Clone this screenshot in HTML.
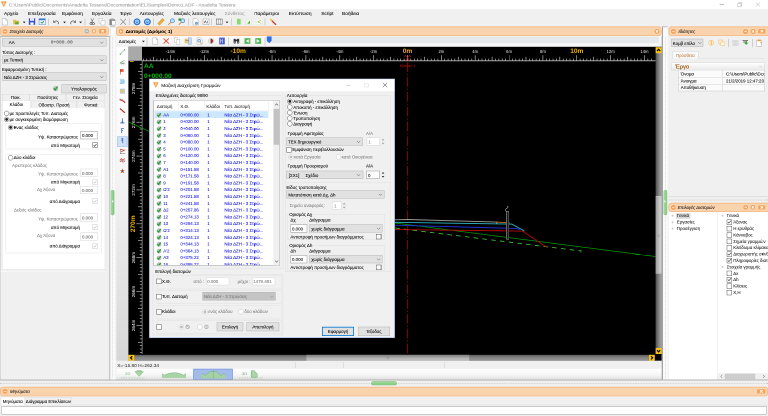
<!DOCTYPE html>
<html lang="el"><head><meta charset="utf-8"><title>Anadelta Tessera</title>
<style>
html,body{margin:0;padding:0;background:#f0f0f0;overflow:hidden;}
body{width:768px;height:416px;position:relative;}
#r{position:absolute;left:0;top:0;width:1920px;height:1040px;transform:scale(.8);transform-origin:0 0;
 font-family:"Liberation Sans",sans-serif;font-size:11px;color:#000;background:#f0f0f0;overflow:hidden;}
#r div,#r svg{position:absolute;box-sizing:border-box;}
#r svg{overflow:visible;}
.t{white-space:nowrap;line-height:20px;height:20px;-webkit-text-stroke:.15px;}
#o{position:absolute;left:0;top:0;width:1536px;height:832px;transform:scale(.5);transform-origin:0 0;will-change:transform;overflow:hidden;}
.m{font-size:12px;}
.g{color:#838383;}
.b{font-weight:bold;}
.i{font-style:italic;}
.mono{font-family:"Liberation Mono",monospace;}
.hdr{background:#f9d3ae;border:2px solid #f6ba82;border-radius:7px;}
.combo{background:#e1e1e1;border:1px solid #adadad;}
.inp{background:#fff;border:1px solid #7a7a7a;}
.inpd{background:#fff;border:1px solid #ccc;}
.btn{background:#e1e1e1;border:1px solid #adadad;text-align:center;}
.cb{background:#fff;border:1px solid #333;}
.cbd{background:#fff;border:1px solid #bcbcbc;}
.rd{background:#fff;border:1px solid #333;border-radius:50%;}
.rdd{background:#fff;border:1px solid #bcbcbc;border-radius:50%;}
.gb{border:1px solid #dcdcdc;}
.blue{color:#1414e6;}

</style></head>
<body>
<div id="o"><div id="r">
<div style="left:0px;top:0px;width:1920px;height:23px;background:#fff;"></div>
<svg style="left:1px;top:2px;" width="17" height="17" viewBox="0 0 17 17"><path d="M2.500 1.500h12q1.500 0 .8 1.500l-5.800 11.500q-1 1.500-2 0l-5.800-11.500q-.7-1.500.8-1.500z" fill="#f6a352"/><path d="M6 5h5l-2.500 4.500z" fill="#fbd3a8"/><rect x="7.900" y="4.500" width="1.300" height="4" fill="#fff"/><rect x="7.900" y="9.500" width="1.300" height="1.300" fill="#fff"/></svg>
<div class="t m" style="left:22px;top:1.5px;color:#9b9b9b;">C:\Users\Public\Documents\Anadelta Tessera\Documentation\EL\Samples\Demo1.ADF - Anadelta Tessera</div>
<svg style="left:1799px;top:11px;" width="11" height="1.4" viewBox="0 0 11 1.4"><rect width="11" height="1.400" fill="#8c8c8c"/></svg>
<svg style="left:1844px;top:6px;" width="11" height="11" viewBox="0 0 11 11"><path d="M2.500 2.500v-2h8v8h-2" fill="none" stroke="#a0a0a0"/><rect x=".5" y="2.500" width="8" height="8" fill="#fff" stroke="#a0a0a0"/></svg>
<svg style="left:1890px;top:6px;" width="10" height="10" viewBox="0 0 10 10"><path d="M0 0l10 10M10 0l-10 10" stroke="#a0a0a0" stroke-width="1.1"/></svg>
<div style="left:0px;top:23px;width:1920px;height:20px;background:#f0f0f0;"></div>
<div class="t m" style="left:10px;top:22.5px;">Αρχείο</div>
<div class="t m" style="left:70px;top:22.5px;">Επεξεργασία</div>
<div class="t m" style="left:155px;top:22.5px;">Εμφάνιση</div>
<div class="t m" style="left:230px;top:22.5px;">Εργαλεία</div>
<div class="t m" style="left:300px;top:22.5px;">Έργο</div>
<div class="t m" style="left:349px;top:22.5px;">Λειτουργίες</div>
<div class="t m" style="left:435px;top:22.5px;">Μαζικές λειτουργίες</div>
<div class="t m" style="left:562px;top:22.5px;color:#9a9a9a;">Σύνθετος</div>
<div class="t m" style="left:635px;top:22.5px;">Παράμετροι</div>
<div class="t m" style="left:722px;top:22.5px;">Εκτύπωση</div>
<div class="t m" style="left:803px;top:22.5px;">Script</div>
<div class="t m" style="left:855px;top:22.5px;">Βοήθεια</div>
<div style="left:0px;top:43px;width:1920px;height:23px;background:#f0f0f0;"></div>
<svg style="left:5px;top:46px;" width="14" height="17" viewBox="0 0 14 17"><path d="M.5 .5h9l4 4v12h-13z" fill="#fff" stroke="#9a9a9a"/><path d="M9.5 .5v4h4" fill="#ddd" stroke="#9a9a9a"/></svg>
<svg style="left:33px;top:48px;" width="15" height="13" viewBox="0 0 15 13"><path d="M0 1.500h6l2 2h7v9.500h-15z" fill="#dcc04a"/><path d="M5 6.500h8v6.500h-8z" fill="#5fae3c"/></svg>
<svg style="left:57px;top:54px;" width="7" height="4" viewBox="0 0 7 4"><path d="M0 0h7l-3.5 4z" fill="#222"/></svg>
<svg style="left:72px;top:46px;" width="16" height="16" viewBox="0 0 16 16"><path d="M0 0h16v16h-16z" fill="#3a50c8"/><rect x="3" y="0" width="10" height="6" fill="#e8ecff"/><rect x="4" y="10" width="8" height="6" fill="#fff"/></svg>
<svg style="left:97px;top:46px;" width="17" height="16" viewBox="0 0 17 16"><rect x=".5" y=".5" width="16" height="15" fill="#eaf2ff" stroke="#3a78d0"/><rect x=".5" y=".5" width="16" height="4" fill="#3a78d0"/><path d="M5 9l3 3l5-5" stroke="#2a9a3a" stroke-width="2" fill="none"/></svg>
<div style="left:120px;top:46px;width:1px;height:17px;background:#a0a0a0;"></div>
<svg style="left:133px;top:48px;" width="15" height="13" viewBox="0 0 15 13"><g ><path d="M1 3v5h5" fill="none" stroke="#555" stroke-width="1.6"/><path d="M1.5 8c2-4 7-5 10-2s2 6 0 6" fill="none" stroke="#555" stroke-width="1.8"/></g></svg>
<svg style="left:158px;top:54px;" width="7" height="4" viewBox="0 0 7 4"><path d="M0 0h7l-3.5 4z" fill="#222"/></svg>
<svg style="left:175px;top:48px;" width="15" height="13" viewBox="0 0 15 13"><g transform="translate(15 0) scale(-1 1)"><path d="M1 3v5h5" fill="none" stroke="#555" stroke-width="1.6"/><path d="M1.5 8c2-4 7-5 10-2s2 6 0 6" fill="none" stroke="#555" stroke-width="1.8"/></g></svg>
<svg style="left:198px;top:54px;" width="7" height="4" viewBox="0 0 7 4"><path d="M0 0h7l-3.5 4z" fill="#222"/></svg>
<div style="left:212px;top:46px;width:1px;height:17px;background:#a0a0a0;"></div>
<svg style="left:224px;top:46px;" width="13" height="17" viewBox="0 0 13 17"><path d="M3 0l5 10M10 0l-5 10" stroke="#666" stroke-width="1.4"/><circle cx="3.5" cy="13" r="2.6" fill="none" stroke="#444" stroke-width="1.4"/><circle cx="9.5" cy="13" r="2.6" fill="none" stroke="#444" stroke-width="1.4"/></svg>
<svg style="left:247px;top:46px;" width="16" height="17" viewBox="0 0 16 17"><rect x=".5" y=".5" width="9" height="11" fill="#fff" stroke="#aaa"/><rect x="5.5" y="4.5" width="10" height="12" fill="#fff" stroke="#aaa"/></svg>
<svg style="left:274px;top:46px;" width="16" height="17" viewBox="0 0 16 17"><rect x=".5" y="2.5" width="12" height="14" fill="#888" stroke="#666"/><rect x="5.5" y="5.5" width="10" height="11" fill="#fff" stroke="#999"/><rect x="3" y="0" width="7" height="4" fill="#aaa"/></svg>
<svg style="left:301px;top:47px;" width="14" height="15" viewBox="0 0 14 15"><path d="M0 0l14 15M14 0l-14 15" stroke="#7a7a7a" stroke-width="1.600"/></svg>
<div style="left:323px;top:46px;width:1px;height:17px;background:#a0a0a0;"></div>
<svg style="left:334px;top:46px;" width="17" height="17" viewBox="0 0 17 17"><circle cx="8.5" cy="8.5" r="8" fill="#2f7fd6" stroke="#1b5db0"/><circle cx="8.5" cy="8.5" r="4.2" fill="none" stroke="#d8ecff" stroke-width="1.6"/><rect x="6" y="7.7" width="5" height="1.6" fill="#d8ecff"/></svg>
<svg style="left:360px;top:46px;" width="17" height="17" viewBox="0 0 17 17"><circle cx="8.5" cy="8.5" r="8" fill="#2f7fd6" stroke="#1b5db0"/><circle cx="8.5" cy="8.5" r="4.2" fill="none" stroke="#d8ecff" stroke-width="1.6"/><rect x="6" y="7.7" width="5" height="1.6" fill="#d8ecff"/></svg>
<div style="left:384px;top:46px;width:1px;height:17px;background:#a0a0a0;"></div>
<svg style="left:394px;top:46px;" width="17" height="17" viewBox="0 0 17 17"><path d="M0 13l12-13l5 4l-12 13z" fill="#e8b23a" stroke="#c08a1c"/></svg>
<svg style="left:420px;top:46px;" width="17" height="17" viewBox="0 0 17 17"><circle cx="11" cy="6" r="5" fill="#bfe0ff" stroke="#3a7ad0" stroke-width="1.5"/><path d="M7 10l-6 6" stroke="#d9952a" stroke-width="2.6"/></svg>
<svg style="left:446px;top:46px;" width="17" height="17" viewBox="0 0 17 17"><circle cx="11" cy="6" r="5" fill="#bfe0ff" stroke="#3a7ad0" stroke-width="1.5"/><path d="M7 10l-6 6" stroke="#d9952a" stroke-width="2.6"/><rect x="0" y="0" width="7" height="6" fill="#3a9a3a"/></svg>
<div style="left:471px;top:46px;width:1px;height:17px;background:#a0a0a0;"></div>
<svg style="left:482px;top:46px;" width="14" height="17" viewBox="0 0 14 17"><path d="M.5 .5h9l4 4v12h-13z" fill="#fff" stroke="#9a9a9a"/><circle cx="9" cy="12" r="3" fill="#7ab0ea" stroke="#3a6ab0"/></svg>
<svg style="left:507px;top:47px;" width="16" height="15" viewBox="0 0 16 15"><rect x=".5" y=".5" width="15" height="14" fill="#fff" stroke="#8a8a8a"/><path d="M3 11l3-6l3 6m2 0v-6" stroke="#333" stroke-width="1.3" fill="none"/></svg>
<div style="left:529px;top:46px;width:1px;height:17px;background:#a0a0a0;"></div>
<svg style="left:540px;top:47px;" width="16" height="14" viewBox="0 0 16 14"><rect x=".6" y=".6" width="14.800" height="12.800" fill="#fff" stroke="#444" stroke-width="1.2"/><path d="M5.500 0v14M10.500 0v14" stroke="#444" stroke-width="1"/></svg>
<svg style="left:564px;top:54px;" width="7" height="4" viewBox="0 0 7 4"><path d="M0 0h7l-3.5 4z" fill="#222"/></svg>
<div style="left:578px;top:46px;width:1px;height:17px;background:#a0a0a0;"></div>
<svg style="left:590px;top:46px;" width="14" height="16" viewBox="0 0 14 16"><rect x="0" y="0" width="14" height="16" fill="#dff2d4"/><rect x="2.500" y="1" width="9" height="14" fill="#90d47c"/></svg>
<svg style="left:614px;top:47px;" width="16" height="15" viewBox="0 0 16 15"><rect x=".5" y=".5" width="15" height="14" fill="#f2f9ea" stroke="#cfe6c4"/><path d="M4 12l7-7v7z" fill="#4aa83c"/></svg>
<svg style="left:640px;top:47px;" width="16" height="15" viewBox="0 0 16 15"><rect x=".5" y=".5" width="15" height="14" fill="#fcfcee" stroke="#e4e4d8"/><path d="M12 3.500l-7 4l7 4" fill="none" stroke="#6ab84c" stroke-width="1.4"/></svg>
<div style="left:662px;top:46px;width:1px;height:17px;background:#a0a0a0;"></div>
<svg style="left:674px;top:46px;" width="19" height="18" viewBox="0 0 19 18"><path d="M3 3l13 13" stroke="#d23a2a" stroke-width="3.4"/><path d="M1 1l5 5" stroke="#f2c84a" stroke-width="3.4"/><path d="M10 2l1 2M14 5l2-1" stroke="#f0c040" stroke-width="1.2"/></svg>
<div class="hdr" style="left:0px;top:66px;width:272px;height:24px;"></div>
<svg style="left:4.5px;top:70.5px;" width="15" height="15" viewBox="0 0 15 15"><circle cx="7.5" cy="7.5" r="6.9" fill="#f4a55c" stroke="#fbe3c8" stroke-width="1.2"/><rect x="4.5" y="6.7" width="6" height="1.6" fill="#fff"/></svg>
<div class="t i" style="left:24px;top:68px;color:#1a1a1a;">Στοιχεία Διατομής</div>
<svg style="left:210px;top:71px;" width="14" height="14" viewBox="0 0 14 14"><circle cx="7.0" cy="7.0" r="6.4" fill="#b4b4b4" stroke="#fbe3c8" stroke-width="1.2"/><path d="M4.0 8.5l3-3l3 3" stroke="#fff" stroke-width="1.5" fill="none"/></svg>
<svg style="left:228px;top:71px;" width="14" height="14" viewBox="0 0 14 14"><circle cx="7.0" cy="7.0" r="6.4" fill="#f4a55c" stroke="#fbe3c8" stroke-width="1.2"/><rect x="5.0" y="4.0" width="4" height="6" rx="1" fill="#fff"/></svg>
<svg style="left:246px;top:71px;" width="21" height="14" viewBox="0 0 21 14"><rect x=".5" y=".5" width="20" height="13" rx="4" fill="#f4a55c" stroke="#fbe3c8" stroke-width="1.2"/><path d="M7.5 4.0l6 6m0-6l-6 6" stroke="#fff" stroke-width="2"/></svg>
<div class="hdr" style="left:290px;top:66px;width:1364px;height:24px;"></div>
<svg style="left:294.5px;top:70.5px;" width="15" height="15" viewBox="0 0 15 15"><circle cx="7.5" cy="7.5" r="6.9" fill="#f4a55c" stroke="#fbe3c8" stroke-width="1.2"/><path d="M5.5 4.5l5 3l-5 3z" fill="#fff"/></svg>
<div class="t b" style="left:314px;top:68px;font-size:12px;">Διατομές (Δρόμος 1)</div>
<svg style="left:1634.5px;top:70.5px;" width="15" height="15" viewBox="0 0 15 15"><circle cx="7.5" cy="7.5" r="6.9" fill="#f4a55c" stroke="#fbe3c8" stroke-width="1.2"/><rect x="5.5" y="4.5" width="4" height="6" rx="1" fill="#fff"/></svg>
<div class="hdr" style="left:1671px;top:66px;width:260px;height:24px;"></div>
<svg style="left:1675.5px;top:70.5px;" width="15" height="15" viewBox="0 0 15 15"><circle cx="7.5" cy="7.5" r="6.9" fill="#f4a55c" stroke="#fbe3c8" stroke-width="1.2"/><rect x="4.5" y="6.7" width="6" height="1.6" fill="#fff"/></svg>
<div class="t i" style="left:1696px;top:68px;color:#1a1a1a;">Ιδιότητες</div>
<svg style="left:1855.5px;top:70.5px;" width="15.5" height="15.5" viewBox="0 0 15.5 15.5"><circle cx="7.75" cy="7.75" r="7.15" fill="#f4a55c" stroke="#fbe3c8" stroke-width="1.2"/><path d="M4.75 9.25l3-3l3 3" stroke="#fff" stroke-width="1.5" fill="none"/></svg>
<svg style="left:1874.5px;top:70.5px;" width="15.5" height="15.5" viewBox="0 0 15.5 15.5"><circle cx="7.75" cy="7.75" r="7.15" fill="#f4a55c" stroke="#fbe3c8" stroke-width="1.2"/><rect x="5.75" y="4.75" width="4" height="6" rx="1" fill="#fff"/></svg>
<svg style="left:1894px;top:71px;" width="21" height="14" viewBox="0 0 21 14"><rect x=".5" y=".5" width="20" height="13" rx="4" fill="#f4a55c" stroke="#fbe3c8" stroke-width="1.2"/><path d="M7.5 4.0l6 6m0-6l-6 6" stroke="#fff" stroke-width="2"/></svg>
<div style="left:0px;top:90px;width:274.5px;height:861px;background:#f0f0f0;border-left:1px solid #b4b4b4;border-right:1.5px solid #8c8c8c;border-bottom:1px solid #b0b0b0;"></div>
<div style="left:1px;top:90px;width:272px;height:2px;background:#b0b0b0;"></div>
<div class="combo" style="left:6px;top:95px;width:260px;height:21px;"></div>
<div class="t" style="left:22px;top:96px;">ΑΑ</div>
<div class="t mono" style="left:127px;top:96px;font-size:11.4px;color:#555;">0+000.00</div>
<svg style="left:250px;top:103.5px;" width="9" height="5" viewBox="0 0 9 5"><path d="M.5 .5l4 4l4-4" fill="none" stroke="#444" stroke-width="1.1"/></svg>
<div class="t" style="left:5px;top:120.5px;">Τύπος Διατομής  :</div>
<div class="combo" style="left:6px;top:139px;width:260px;height:21px;"></div>
<div class="t" style="left:10px;top:140px;">με Τυπική</div>
<svg style="left:250px;top:147.5px;" width="9" height="5" viewBox="0 0 9 5"><path d="M.5 .5l4 4l4-4" fill="none" stroke="#444" stroke-width="1.1"/></svg>
<div class="t" style="left:5px;top:163.5px;">Εφαρμοσμένη Τυπική :</div>
<div class="combo" style="left:6px;top:180.5px;width:260px;height:21.5px;"></div>
<div class="t" style="left:10px;top:182.5px;">Νέα ΔΖΗ - 3 Στρώσεις</div>
<svg style="left:250px;top:189.5px;" width="9" height="5" viewBox="0 0 9 5"><path d="M.5 .5l4 4l4-4" fill="none" stroke="#444" stroke-width="1.1"/></svg>
<svg style="left:132px;top:214px;" width="14" height="14" viewBox="0 0 14 14"><circle cx="7" cy="7.500" r="6.500" fill="#bdbdbd"/><path d="M2.500 7l3.300 3.800l6-8.800" stroke="#16a02c" stroke-width="2.900" fill="none"/></svg>
<div class="btn" style="left:154px;top:210.5px;width:112px;height:22px;"></div>
<div class="t" style="left:154px;top:212px;width:112px;text-align:center;">Υπολογισμός</div>
<div style="left:5px;top:235px;width:69px;height:17px;background:#f0f0f0;border:1px solid #d9d9d9;border-bottom:none;"></div>
<div class="t" style="left:5px;top:234px;width:69px;text-align:center;">Ποικ.</div>
<div style="left:74px;top:235px;width:91px;height:17px;background:#f0f0f0;border:1px solid #d9d9d9;border-bottom:none;"></div>
<div class="t" style="left:74px;top:234px;width:91px;text-align:center;">Ποσότητες</div>
<div style="left:165px;top:235px;width:97px;height:17px;background:#f0f0f0;border:1px solid #d9d9d9;border-bottom:none;"></div>
<div class="t" style="left:165px;top:234px;width:97px;text-align:center;">Γεν. Στοιχεία</div>
<div style="left:5px;top:251px;width:72px;height:19px;background:#fff;border:1px solid #d9d9d9;border-bottom:none;"></div>
<div class="t" style="left:5px;top:251px;width:72px;text-align:center;">Κλάδοι</div>
<div style="left:79px;top:252px;width:112px;height:18px;background:#f0f0f0;border:1px solid #d9d9d9;border-bottom:none;"></div>
<div class="t" style="left:79px;top:251.5px;width:112px;text-align:center;">Οδοστρ. Προσή</div>
<div style="left:192px;top:252px;width:70px;height:18px;background:#f0f0f0;border:1px solid #d9d9d9;border-bottom:none;"></div>
<div class="t" style="left:192px;top:251.5px;width:70px;text-align:center;">Φυτικά</div>
<div style="left:5px;top:270px;width:258px;height:404px;background:#fff;border:1px solid #d9d9d9;border-top:none;"></div>
<div class="rd" style="left:10px;top:276.5px;width:13px;height:13px;"></div>
<div class="t" style="left:24px;top:273px;">με προεπιλεγές Τυπ. Διατομές</div>
<div class="rd" style="left:10px;top:291.5px;width:13px;height:13px;"></div>
<div style="left:13px;top:294.5px;width:7px;height:7px;background:#222;border-radius:50%;"></div>
<div class="t" style="left:24px;top:288px;">με συγκεκριμένη διαμόρφωση</div>
<div class="gb" style="left:14px;top:309px;width:240px;height:64px;"></div>
<div class="rd" style="left:20px;top:311.5px;width:13px;height:13px;"></div>
<div style="left:23px;top:314.5px;width:7px;height:7px;background:#222;border-radius:50%;"></div>
<div class="t" style="left:34px;top:308px;">Ενας κλάδος</div>
<div class="t" style="right:1725px;top:332px;">Υψ. Καταστρώματος</div>
<div class="inp" style="left:201px;top:328px;width:43px;height:20px;"></div>
<div class="t" style="left:205px;top:328.5px;">0.000</div>
<div class="t" style="right:1720px;top:352.5px;">από Μηκοτομή</div>
<div class="cb" style="left:231px;top:356px;width:13px;height:13px;"></div>
<svg style="left:233px;top:358.5px;" width="9" height="8" viewBox="0 0 9 8"><path d="M.8 4l2.6 2.8l5-6" fill="none" stroke="#222" stroke-width="1.4"/></svg>
<div class="gb" style="left:14px;top:385px;width:240px;height:248px;"></div>
<div class="rd" style="left:20px;top:387.5px;width:13px;height:13px;"></div>
<div class="t" style="left:34px;top:384px;">Δύο κλάδοι</div>
<div class="t g" style="left:30px;top:402.5px;">Αριστερός κλάδος</div>
<div class="t g" style="right:1725px;top:425px;">Υψ. Καταστρώματος</div>
<div class="inpd" style="left:201px;top:422px;width:43px;height:20px;"></div>
<div class="t" style="left:205px;top:422.5px;color:#666;">0.000</div>
<div class="t" style="right:1720px;top:445px;">από Μηκοτομή</div>
<div class="cbd" style="left:231px;top:448.5px;width:13px;height:13px;"></div>
<svg style="left:233px;top:451px;" width="9" height="8" viewBox="0 0 9 8"><path d="M.8 4l2.6 2.8l5-6" fill="none" stroke="#bdbdbd" stroke-width="1.4"/></svg>
<div class="t g" style="right:1782px;top:464px;">Δχ Άξονα</div>
<div class="inpd" style="left:201px;top:465px;width:43px;height:20px;"></div>
<div class="t" style="left:205px;top:465.5px;color:#666;">0.000</div>
<div class="t" style="right:1720px;top:492.5px;">από Διάγραμμα</div>
<div class="cbd" style="left:231px;top:496px;width:13px;height:13px;"></div>
<svg style="left:233px;top:498.5px;" width="9" height="8" viewBox="0 0 9 8"><path d="M.8 4l2.6 2.8l5-6" fill="none" stroke="#bdbdbd" stroke-width="1.4"/></svg>
<div class="t g" style="left:35px;top:515px;">Δεξιός κλάδος</div>
<div class="t g" style="right:1725px;top:537px;">Υψ. Καταστρώματος</div>
<div class="inpd" style="left:201px;top:534px;width:43px;height:20px;"></div>
<div class="t" style="left:205px;top:534.5px;color:#666;">0.000</div>
<div class="t" style="right:1720px;top:557.5px;">από Μηκοτομή</div>
<div class="cbd" style="left:231px;top:561px;width:13px;height:13px;"></div>
<svg style="left:233px;top:563.5px;" width="9" height="8" viewBox="0 0 9 8"><path d="M.8 4l2.6 2.8l5-6" fill="none" stroke="#bdbdbd" stroke-width="1.4"/></svg>
<div class="t g" style="right:1782px;top:579px;">Δχ Άξονα</div>
<div class="inpd" style="left:201px;top:581px;width:43px;height:20px;"></div>
<div class="t" style="left:205px;top:581.5px;color:#666;">0.000</div>
<div class="t" style="right:1720px;top:605px;">από Διάγραμμα</div>
<div class="cbd" style="left:231px;top:608.5px;width:13px;height:13px;"></div>
<svg style="left:233px;top:611px;" width="9" height="8" viewBox="0 0 9 8"><path d="M.8 4l2.6 2.8l5-6" fill="none" stroke="#bdbdbd" stroke-width="1.4"/></svg>
<div style="left:1px;top:677px;width:262px;height:2px;background:#fcfcfc;"></div>
<div style="left:275px;top:66px;width:15px;height:885px;background:#f0f0f0;"></div>
<div style="left:276px;top:66px;width:12px;height:883px;background:#fafafa;border-top:2px solid #b4b4b4;border-left:1px solid #d8d8d8;"></div>
<div style="left:281px;top:92px;width:1px;height:852px;border-left:1px dotted #b0b0b0;"></div>
<div style="left:277px;top:475px;width:9px;height:63px;background:linear-gradient(90deg,#a8dca0,#7cc878);border:1px solid #6ab868;border-radius:4px;"></div>
<svg style="left:278px;top:500px;" width="5" height="7" viewBox="0 0 5 7"><path d="M5 0v7l-4-3.5z" fill="#fff"/></svg>
<div style="left:290px;top:90px;width:1365px;height:861px;background:#f0f0f0;border-right:1px solid #a8a8a8;border-bottom:1px solid #b0b0b0;"></div>
<div style="left:291px;top:90px;width:1363px;height:27px;background:linear-gradient(#fbfbfb,#f1f1f1);"></div>
<div class="t" style="left:297px;top:93px;">Διατομές</div>
<svg style="left:355px;top:102px;" width="7" height="4" viewBox="0 0 7 4"><path d="M0 0h7l-3.5 4z" fill="#222"/></svg>
<div style="left:367px;top:93px;width:1px;height:21px;background:#9a9a9a;"></div>
<svg style="left:381px;top:94px;" width="14" height="17" viewBox="0 0 14 17"><path d="M.5 .5h9l4 4v12h-13z" fill="#fff" stroke="#9a9a9a"/><path d="M9.5 .5v4h4" fill="#ddd" stroke="#9a9a9a"/></svg>
<svg style="left:408px;top:95px;" width="15" height="15" viewBox="0 0 15 15"><path d="M1 1l13 13M14 1l-13 13" stroke="#e8402a" stroke-width="2.2"/></svg>
<svg style="left:435px;top:94px;" width="15" height="17" viewBox="0 0 15 17"><rect x=".5" y=".5" width="9" height="11" fill="#fff" stroke="#aaa"/><rect x="5.5" y="4.5" width="9" height="12" fill="#fff" stroke="#aaa"/></svg>
<svg style="left:462px;top:94px;" width="17" height="17" viewBox="0 0 17 17"><rect x=".5" y="3.5" width="11" height="10" fill="#f5d77a" stroke="#c9a53a"/><rect x="8.5" y=".5" width="8" height="16" fill="#c8d8f0" stroke="#7a9ad0"/><path d="M2 8h8" stroke="#555" stroke-width="1.4"/></svg>
<svg style="left:492px;top:94px;" width="15" height="17" viewBox="0 0 15 17"><path d="M.5 .5h9l4 4v12h-13z" fill="#fff" stroke="#9a9a9a"/><circle cx="6" cy="8" r="3.4" fill="#cfe6ff" stroke="#3a7ad0" stroke-width="1.3"/><path d="M8 11l4 4" stroke="#d9952a" stroke-width="2"/></svg>
<svg style="left:520px;top:95px;" width="15" height="15" viewBox="0 0 15 15"><circle cx="7.5" cy="7.5" r="7" fill="#e9e9e9" stroke="#bdbdbd"/><path d="M7.5 2a5.5 5.5 0 0 1 0 11z" fill="#d8281e"/><rect x="6.6" y="2" width="1.8" height="11" fill="#333"/></svg>
<svg style="left:548px;top:94px;" width="14" height="17" viewBox="0 0 14 17"><rect x="0" y="0" width="14" height="17" fill="#4a5ad2"/><path d="M3 3v11M3 8h5M8 3v11" stroke="#cfd6ff" stroke-width="1.6" fill="none"/></svg>
<div style="left:571px;top:93px;width:1px;height:21px;background:#9a9a9a;"></div>
<svg style="left:583px;top:95px;" width="16" height="15" viewBox="0 0 16 15"><rect x="1" y="2" width="5.5" height="12" rx="2" fill="#333"/><rect x="9.5" y="2" width="5.5" height="12" rx="2" fill="#333"/><rect x="5" y="4" width="6" height="4" fill="#333"/><rect x="2.2" y="9" width="3" height="4" fill="#999"/><rect x="10.8" y="9" width="3" height="4" fill="#999"/></svg>
<svg style="left:611px;top:95px;" width="15" height="15" viewBox="0 0 15 15"><rect x=".5" y=".5" width="14" height="14" fill="#56b456" stroke="#7cc87c"/><path d="M10 3.500v8l-6-4z" fill="#fff"/><rect x="10" y="3.500" width="2" height="8" fill="#c8e8c8"/></svg>
<svg style="left:638px;top:95px;" width="15" height="15" viewBox="0 0 15 15"><rect x=".5" y=".5" width="14" height="14" fill="#56b456" stroke="#7cc87c"/><path d="M5 3.500v8l6-4z" fill="#fff"/><rect x="3" y="3.500" width="2" height="8" fill="#c8e8c8"/></svg>
<div style="left:662px;top:93px;width:1px;height:21px;background:#9a9a9a;"></div>
<div style="left:666px;top:91px;width:981px;height:17px;background:#e6e9ec;"></div>
<div style="left:666px;top:108px;width:981px;height:8px;background:#f7f7f7;"></div>
<svg style="left:667px;top:91px;" width="12" height="17" viewBox="0 0 12 17"><path d="M0 0h12v11l-6 6l-6-6z" fill="#2f6fe0"/></svg>
<div style="left:291px;top:117px;width:30px;height:785px;background:linear-gradient(#ffffff 0%,#fafafa 30%,#d6d6d6 100%);"></div>
<svg style="left:298px;top:122px;" width="16" height="16" viewBox="0 0 18 18"><path d="M3 15l12-12" stroke="#2a8a2a" stroke-width="1.400"/><circle cx="3" cy="15" r="1.600" fill="#2a7a2a"/><circle cx="15" cy="3" r="1.600" fill="#2a7a2a"/></svg>
<svg style="left:298px;top:147px;" width="16" height="16" viewBox="0 0 18 18"><path d="M2 12l13-8M2 12h14" stroke="#3a7a3a" stroke-width="1.4" fill="none"/><path d="M6 16l4-4l4 4" stroke="#333" stroke-width="1.2" fill="none"/></svg>
<svg style="left:298px;top:171px;" width="16" height="16" viewBox="0 0 18 18"><path d="M3 2v15" stroke="#a03020" stroke-width="1.500"/><path d="M3.500 2.500h10l-2 3.500l2 3.500h-10z" fill="#e8481e"/></svg>
<svg style="left:298px;top:196px;" width="16" height="16" viewBox="0 0 18 18"><path d="M2 3h11l3 6l-3 6h-11l2.500-6z" fill="#a4d4f0" stroke="#86bce0"/></svg>
<svg style="left:298px;top:220px;" width="16" height="16" viewBox="0 0 18 18"><rect x="2" y="2" width="14" height="14" fill="#b4c8ec"/><rect x="5" y="5" width="8" height="8" fill="#f0c850"/></svg>
<svg style="left:298px;top:245px;" width="16" height="16" viewBox="0 0 18 18"><path d="M1 5c6 0 10 3 16 9" stroke="#c8281e" stroke-width="2.6" fill="none"/><path d="M1 3c6 0 11 3 16 8" stroke="#333" stroke-width="1" fill="none"/></svg>
<svg style="left:298px;top:269px;" width="16" height="16" viewBox="0 0 18 18"><path d="M2 3l14 12" stroke="#d0281e" stroke-width="2.8"/><path d="M3 2l14 12" stroke="#333" stroke-width="1"/></svg>
<svg style="left:298px;top:294px;" width="16" height="16" viewBox="0 0 18 18"><path d="M9 2v12M3 15h12" stroke="#3a6ab8" stroke-width="2.2"/><path d="M6 15l3-7l3 7z" fill="#3a6ab8"/></svg>
<svg style="left:298px;top:318px;" width="16" height="16" viewBox="0 0 18 18"><path d="M7 2v15M7 4h6M7 9h4" stroke="#3a6ab8" stroke-width="2.2" fill="none"/></svg>
<div style="left:293px;top:341px;width:25px;height:26px;background:#cfe0f7;border:1px solid #8ab0e8;"></div>
<svg style="left:298px;top:343px;" width="16" height="16" viewBox="0 0 18 18"><path d="M10 2v15M5 5h5M6 10h4" stroke="#3a6ab8" stroke-width="2.2" fill="none"/></svg>
<svg style="left:298px;top:370px;" width="16" height="16" viewBox="0 0 18 18"><path d="M3 2v15M3 16h14" stroke="#555" stroke-width="1.2"/><path d="M3 4l12 2l-10 5" stroke="#d0281e" stroke-width="1.8" fill="none"/></svg>
<svg style="left:298px;top:394px;" width="16" height="16" viewBox="0 0 18 18"><path d="M2 6l4-3l4 4l6-4M2 12l5-3l3 4l6-2" stroke="#d0281e" stroke-width="1.6" fill="none"/><path d="M1 9h16" stroke="#555" stroke-width="1"/></svg>
<svg style="left:298px;top:420px;" width="16" height="16" viewBox="0 0 18 18"><path d="M9 1l2 5h5l-4 3l2 6l-5-3l-5 3l2-6l-4-3h5z" fill="#d86a1e"/><circle cx="9" cy="9" r="2.2" fill="#3a4ac8"/></svg>
<div style="left:321px;top:117px;width:1333px;height:785px;background:#000;"></div>
<div style="left:321px;top:117px;width:34px;height:35px;background:#a9a9a9;"></div>
<svg style="left:0;top:0" width="1920" height="1040" viewBox="0 0 1920 1040" font-family="Liberation Sans, sans-serif"><rect x="355" y="151" width="1284" height="2" fill="#cccccc"/><rect x="357.7" y="146.5" width="1.600" height="5.5" fill="#c4c4c4"/><rect x="366.1" y="146.5" width="1.600" height="5.5" fill="#c4c4c4"/><rect x="374.6" y="146.5" width="1.600" height="5.5" fill="#c4c4c4"/><rect x="383.1" y="142" width="1.600" height="10" fill="#c4c4c4"/><rect x="391.5" y="146.5" width="1.600" height="5.5" fill="#c4c4c4"/><rect x="400.0" y="146.5" width="1.600" height="5.5" fill="#c4c4c4"/><rect x="408.4" y="146.5" width="1.600" height="5.5" fill="#c4c4c4"/><rect x="416.9" y="146.5" width="1.600" height="5.5" fill="#c4c4c4"/><rect x="425.4" y="138" width="1.600" height="14" fill="#c4c4c4"/><rect x="433.8" y="146.5" width="1.600" height="5.5" fill="#c4c4c4"/><rect x="442.3" y="146.5" width="1.600" height="5.5" fill="#c4c4c4"/><rect x="450.8" y="146.5" width="1.600" height="5.5" fill="#c4c4c4"/><rect x="459.2" y="146.5" width="1.600" height="5.5" fill="#c4c4c4"/><rect x="467.7" y="142" width="1.600" height="10" fill="#c4c4c4"/><rect x="476.2" y="146.5" width="1.600" height="5.5" fill="#c4c4c4"/><rect x="484.6" y="146.5" width="1.600" height="5.5" fill="#c4c4c4"/><rect x="493.1" y="146.5" width="1.600" height="5.5" fill="#c4c4c4"/><rect x="501.5" y="146.5" width="1.600" height="5.5" fill="#c4c4c4"/><rect x="510.0" y="138" width="1.600" height="14" fill="#c4c4c4"/><rect x="518.5" y="146.5" width="1.600" height="5.5" fill="#c4c4c4"/><rect x="526.9" y="146.5" width="1.600" height="5.5" fill="#c4c4c4"/><rect x="535.4" y="146.5" width="1.600" height="5.5" fill="#c4c4c4"/><rect x="543.9" y="146.5" width="1.600" height="5.5" fill="#c4c4c4"/><rect x="552.3" y="142" width="1.600" height="10" fill="#c4c4c4"/><rect x="560.8" y="146.5" width="1.600" height="5.5" fill="#c4c4c4"/><rect x="569.3" y="146.5" width="1.600" height="5.5" fill="#c4c4c4"/><rect x="577.7" y="146.5" width="1.600" height="5.5" fill="#c4c4c4"/><rect x="586.2" y="146.5" width="1.600" height="5.5" fill="#c4c4c4"/><rect x="594.6" y="138" width="1.600" height="14" fill="#c4c4c4"/><rect x="603.1" y="146.5" width="1.600" height="5.5" fill="#c4c4c4"/><rect x="611.6" y="146.5" width="1.600" height="5.5" fill="#c4c4c4"/><rect x="620.0" y="146.5" width="1.600" height="5.5" fill="#c4c4c4"/><rect x="628.5" y="146.5" width="1.600" height="5.5" fill="#c4c4c4"/><rect x="637.0" y="142" width="1.600" height="10" fill="#c4c4c4"/><rect x="645.4" y="146.5" width="1.600" height="5.5" fill="#c4c4c4"/><rect x="653.9" y="146.5" width="1.600" height="5.5" fill="#c4c4c4"/><rect x="662.4" y="146.5" width="1.600" height="5.5" fill="#c4c4c4"/><rect x="670.8" y="146.5" width="1.600" height="5.5" fill="#c4c4c4"/><rect x="679.3" y="138" width="1.600" height="14" fill="#c4c4c4"/><rect x="687.8" y="146.5" width="1.600" height="5.5" fill="#c4c4c4"/><rect x="696.2" y="146.5" width="1.600" height="5.5" fill="#c4c4c4"/><rect x="704.7" y="146.5" width="1.600" height="5.5" fill="#c4c4c4"/><rect x="713.1" y="146.5" width="1.600" height="5.5" fill="#c4c4c4"/><rect x="721.6" y="142" width="1.600" height="10" fill="#c4c4c4"/><rect x="730.1" y="146.5" width="1.600" height="5.5" fill="#c4c4c4"/><rect x="738.5" y="146.5" width="1.600" height="5.5" fill="#c4c4c4"/><rect x="747.0" y="146.5" width="1.600" height="5.5" fill="#c4c4c4"/><rect x="755.5" y="146.5" width="1.600" height="5.5" fill="#c4c4c4"/><rect x="763.9" y="138" width="1.600" height="14" fill="#c4c4c4"/><rect x="772.4" y="146.5" width="1.600" height="5.5" fill="#c4c4c4"/><rect x="780.9" y="146.5" width="1.600" height="5.5" fill="#c4c4c4"/><rect x="789.3" y="146.5" width="1.600" height="5.5" fill="#c4c4c4"/><rect x="797.8" y="146.5" width="1.600" height="5.5" fill="#c4c4c4"/><rect x="806.2" y="142" width="1.600" height="10" fill="#c4c4c4"/><rect x="814.7" y="146.5" width="1.600" height="5.5" fill="#c4c4c4"/><rect x="823.2" y="146.5" width="1.600" height="5.5" fill="#c4c4c4"/><rect x="831.6" y="146.5" width="1.600" height="5.5" fill="#c4c4c4"/><rect x="840.1" y="146.5" width="1.600" height="5.5" fill="#c4c4c4"/><rect x="848.6" y="138" width="1.600" height="14" fill="#c4c4c4"/><rect x="857.0" y="146.5" width="1.600" height="5.5" fill="#c4c4c4"/><rect x="865.5" y="146.5" width="1.600" height="5.5" fill="#c4c4c4"/><rect x="874.0" y="146.5" width="1.600" height="5.5" fill="#c4c4c4"/><rect x="882.4" y="146.5" width="1.600" height="5.5" fill="#c4c4c4"/><rect x="890.9" y="142" width="1.600" height="10" fill="#c4c4c4"/><rect x="899.4" y="146.5" width="1.600" height="5.5" fill="#c4c4c4"/><rect x="907.8" y="146.5" width="1.600" height="5.5" fill="#c4c4c4"/><rect x="916.3" y="146.5" width="1.600" height="5.5" fill="#c4c4c4"/><rect x="924.7" y="146.5" width="1.600" height="5.5" fill="#c4c4c4"/><rect x="933.2" y="138" width="1.600" height="14" fill="#c4c4c4"/><rect x="941.7" y="146.5" width="1.600" height="5.5" fill="#c4c4c4"/><rect x="950.1" y="146.5" width="1.600" height="5.5" fill="#c4c4c4"/><rect x="958.6" y="146.5" width="1.600" height="5.5" fill="#c4c4c4"/><rect x="967.1" y="146.5" width="1.600" height="5.5" fill="#c4c4c4"/><rect x="975.5" y="142" width="1.600" height="10" fill="#c4c4c4"/><rect x="984.0" y="146.5" width="1.600" height="5.5" fill="#c4c4c4"/><rect x="992.5" y="146.5" width="1.600" height="5.5" fill="#c4c4c4"/><rect x="1000.9" y="146.5" width="1.600" height="5.5" fill="#c4c4c4"/><rect x="1009.4" y="146.5" width="1.600" height="5.5" fill="#c4c4c4"/><rect x="1017.9" y="138" width="1.600" height="14" fill="#c4c4c4"/><rect x="1026.3" y="146.5" width="1.600" height="5.5" fill="#c4c4c4"/><rect x="1034.8" y="146.5" width="1.600" height="5.5" fill="#c4c4c4"/><rect x="1043.2" y="146.5" width="1.600" height="5.5" fill="#c4c4c4"/><rect x="1051.7" y="146.5" width="1.600" height="5.5" fill="#c4c4c4"/><rect x="1060.2" y="142" width="1.600" height="10" fill="#c4c4c4"/><rect x="1068.6" y="146.5" width="1.600" height="5.5" fill="#c4c4c4"/><rect x="1077.1" y="146.5" width="1.600" height="5.5" fill="#c4c4c4"/><rect x="1085.6" y="146.5" width="1.600" height="5.5" fill="#c4c4c4"/><rect x="1094.0" y="146.5" width="1.600" height="5.5" fill="#c4c4c4"/><rect x="1102.5" y="138" width="1.600" height="14" fill="#c4c4c4"/><rect x="1111.0" y="146.5" width="1.600" height="5.5" fill="#c4c4c4"/><rect x="1119.4" y="146.5" width="1.600" height="5.5" fill="#c4c4c4"/><rect x="1127.9" y="146.5" width="1.600" height="5.5" fill="#c4c4c4"/><rect x="1136.3" y="146.5" width="1.600" height="5.5" fill="#c4c4c4"/><rect x="1144.8" y="142" width="1.600" height="10" fill="#c4c4c4"/><rect x="1153.3" y="146.5" width="1.600" height="5.5" fill="#c4c4c4"/><rect x="1161.7" y="146.5" width="1.600" height="5.5" fill="#c4c4c4"/><rect x="1170.2" y="146.5" width="1.600" height="5.5" fill="#c4c4c4"/><rect x="1178.7" y="146.5" width="1.600" height="5.5" fill="#c4c4c4"/><rect x="1187.1" y="138" width="1.600" height="14" fill="#c4c4c4"/><rect x="1195.6" y="146.5" width="1.600" height="5.5" fill="#c4c4c4"/><rect x="1204.1" y="146.5" width="1.600" height="5.5" fill="#c4c4c4"/><rect x="1212.5" y="146.5" width="1.600" height="5.5" fill="#c4c4c4"/><rect x="1221.0" y="146.5" width="1.600" height="5.5" fill="#c4c4c4"/><rect x="1229.4" y="142" width="1.600" height="10" fill="#c4c4c4"/><rect x="1237.9" y="146.5" width="1.600" height="5.5" fill="#c4c4c4"/><rect x="1246.4" y="146.5" width="1.600" height="5.5" fill="#c4c4c4"/><rect x="1254.8" y="146.5" width="1.600" height="5.5" fill="#c4c4c4"/><rect x="1263.3" y="146.5" width="1.600" height="5.5" fill="#c4c4c4"/><rect x="1271.8" y="138" width="1.600" height="14" fill="#c4c4c4"/><rect x="1280.2" y="146.5" width="1.600" height="5.5" fill="#c4c4c4"/><rect x="1288.7" y="146.5" width="1.600" height="5.5" fill="#c4c4c4"/><rect x="1297.2" y="146.5" width="1.600" height="5.5" fill="#c4c4c4"/><rect x="1305.6" y="146.5" width="1.600" height="5.5" fill="#c4c4c4"/><rect x="1314.1" y="142" width="1.600" height="10" fill="#c4c4c4"/><rect x="1322.6" y="146.5" width="1.600" height="5.5" fill="#c4c4c4"/><rect x="1331.0" y="146.5" width="1.600" height="5.5" fill="#c4c4c4"/><rect x="1339.5" y="146.5" width="1.600" height="5.5" fill="#c4c4c4"/><rect x="1347.9" y="146.5" width="1.600" height="5.5" fill="#c4c4c4"/><rect x="1356.4" y="138" width="1.600" height="14" fill="#c4c4c4"/><rect x="1364.9" y="146.5" width="1.600" height="5.5" fill="#c4c4c4"/><rect x="1373.3" y="146.5" width="1.600" height="5.5" fill="#c4c4c4"/><rect x="1381.8" y="146.5" width="1.600" height="5.5" fill="#c4c4c4"/><rect x="1390.3" y="146.5" width="1.600" height="5.5" fill="#c4c4c4"/><rect x="1398.7" y="142" width="1.600" height="10" fill="#c4c4c4"/><rect x="1407.2" y="146.5" width="1.600" height="5.5" fill="#c4c4c4"/><rect x="1415.7" y="146.5" width="1.600" height="5.5" fill="#c4c4c4"/><rect x="1424.1" y="146.5" width="1.600" height="5.5" fill="#c4c4c4"/><rect x="1432.6" y="146.5" width="1.600" height="5.5" fill="#c4c4c4"/><rect x="1441.0" y="138" width="1.600" height="14" fill="#c4c4c4"/><rect x="1449.5" y="146.5" width="1.600" height="5.5" fill="#c4c4c4"/><rect x="1458.0" y="146.5" width="1.600" height="5.5" fill="#c4c4c4"/><rect x="1466.4" y="146.5" width="1.600" height="5.5" fill="#c4c4c4"/><rect x="1474.9" y="146.5" width="1.600" height="5.5" fill="#c4c4c4"/><rect x="1483.4" y="142" width="1.600" height="10" fill="#c4c4c4"/><rect x="1491.8" y="146.5" width="1.600" height="5.5" fill="#c4c4c4"/><rect x="1500.3" y="146.5" width="1.600" height="5.5" fill="#c4c4c4"/><rect x="1508.8" y="146.5" width="1.600" height="5.5" fill="#c4c4c4"/><rect x="1517.2" y="146.5" width="1.600" height="5.5" fill="#c4c4c4"/><rect x="1525.7" y="138" width="1.600" height="14" fill="#c4c4c4"/><rect x="1534.2" y="146.5" width="1.600" height="5.5" fill="#c4c4c4"/><rect x="1542.6" y="146.5" width="1.600" height="5.5" fill="#c4c4c4"/><rect x="1551.1" y="146.5" width="1.600" height="5.5" fill="#c4c4c4"/><rect x="1559.5" y="146.5" width="1.600" height="5.5" fill="#c4c4c4"/><rect x="1568.0" y="142" width="1.600" height="10" fill="#c4c4c4"/><rect x="1576.5" y="146.5" width="1.600" height="5.5" fill="#c4c4c4"/><rect x="1584.9" y="146.5" width="1.600" height="5.5" fill="#c4c4c4"/><rect x="1593.4" y="146.5" width="1.600" height="5.5" fill="#c4c4c4"/><rect x="1601.9" y="146.5" width="1.600" height="5.5" fill="#c4c4c4"/><rect x="1610.3" y="138" width="1.600" height="14" fill="#c4c4c4"/><rect x="1618.8" y="146.5" width="1.600" height="5.5" fill="#c4c4c4"/><rect x="1627.3" y="146.5" width="1.600" height="5.5" fill="#c4c4c4"/><text x="426.3" y="132.500" text-anchor="middle" font-size="10.5" fill="#e8e8e8">-14m</text><text x="510.9" y="132.500" text-anchor="middle" font-size="10.5" fill="#e8e8e8">-12m</text><text x="595.5" y="133" text-anchor="middle" font-size="16.5" font-weight="bold" fill="#f2b100">-10m</text><text x="680.2" y="132.500" text-anchor="middle" font-size="10.5" fill="#e8e8e8">-8m</text><text x="764.8" y="132.500" text-anchor="middle" font-size="10.5" fill="#e8e8e8">-6m</text><text x="849.5" y="132.500" text-anchor="middle" font-size="10.5" fill="#e8e8e8">-4m</text><text x="934.1" y="132.500" text-anchor="middle" font-size="10.5" fill="#e8e8e8">-2m</text><text x="1018.8" y="133" text-anchor="middle" font-size="16.5" font-weight="bold" fill="#f2b100">0m</text><text x="1103.4" y="132.500" text-anchor="middle" font-size="10.5" fill="#e8e8e8">2m</text><text x="1188.0" y="132.500" text-anchor="middle" font-size="10.5" fill="#e8e8e8">4m</text><text x="1272.7" y="132.500" text-anchor="middle" font-size="10.5" fill="#e8e8e8">6m</text><text x="1357.3" y="132.500" text-anchor="middle" font-size="10.5" fill="#e8e8e8">8m</text><text x="1442.0" y="133" text-anchor="middle" font-size="16.5" font-weight="bold" fill="#f2b100">10m</text><text x="1526.6" y="132.500" text-anchor="middle" font-size="10.5" fill="#e8e8e8">12m</text><text x="1611.2" y="132.500" text-anchor="middle" font-size="10.5" fill="#e8e8e8">14m</text><rect x="354.500" y="152" width="1.500" height="733" fill="#c0c0c0"/><rect x="349.5" y="160.9" width="5.5" height="1.600" fill="#c4c4c4"/><rect x="349.5" y="169.3" width="5.5" height="1.600" fill="#c4c4c4"/><rect x="345" y="177.8" width="10" height="1.600" fill="#c4c4c4"/><rect x="349.5" y="186.2" width="5.5" height="1.600" fill="#c4c4c4"/><rect x="349.5" y="194.7" width="5.5" height="1.600" fill="#c4c4c4"/><rect x="349.5" y="203.2" width="5.5" height="1.600" fill="#c4c4c4"/><rect x="349.5" y="211.6" width="5.5" height="1.600" fill="#c4c4c4"/><rect x="341" y="220.1" width="14" height="1.600" fill="#c4c4c4"/><rect x="349.5" y="228.6" width="5.5" height="1.600" fill="#c4c4c4"/><rect x="349.5" y="237.0" width="5.5" height="1.600" fill="#c4c4c4"/><rect x="349.5" y="245.5" width="5.5" height="1.600" fill="#c4c4c4"/><rect x="349.5" y="254.0" width="5.5" height="1.600" fill="#c4c4c4"/><rect x="345" y="262.4" width="10" height="1.600" fill="#c4c4c4"/><rect x="349.5" y="270.9" width="5.5" height="1.600" fill="#c4c4c4"/><rect x="349.5" y="279.3" width="5.5" height="1.600" fill="#c4c4c4"/><rect x="349.5" y="287.8" width="5.5" height="1.600" fill="#c4c4c4"/><rect x="349.5" y="296.3" width="5.5" height="1.600" fill="#c4c4c4"/><rect x="341" y="304.7" width="14" height="1.600" fill="#c4c4c4"/><rect x="349.5" y="313.2" width="5.5" height="1.600" fill="#c4c4c4"/><rect x="349.5" y="321.7" width="5.5" height="1.600" fill="#c4c4c4"/><rect x="349.5" y="330.1" width="5.5" height="1.600" fill="#c4c4c4"/><rect x="349.5" y="338.6" width="5.5" height="1.600" fill="#c4c4c4"/><rect x="345" y="347.1" width="10" height="1.600" fill="#c4c4c4"/><rect x="349.5" y="355.5" width="5.5" height="1.600" fill="#c4c4c4"/><rect x="349.5" y="364.0" width="5.5" height="1.600" fill="#c4c4c4"/><rect x="349.5" y="372.5" width="5.5" height="1.600" fill="#c4c4c4"/><rect x="349.5" y="380.9" width="5.5" height="1.600" fill="#c4c4c4"/><rect x="341" y="389.4" width="14" height="1.600" fill="#c4c4c4"/><rect x="349.5" y="397.8" width="5.5" height="1.600" fill="#c4c4c4"/><rect x="349.5" y="406.3" width="5.5" height="1.600" fill="#c4c4c4"/><rect x="349.5" y="414.8" width="5.5" height="1.600" fill="#c4c4c4"/><rect x="349.5" y="423.2" width="5.5" height="1.600" fill="#c4c4c4"/><rect x="345" y="431.7" width="10" height="1.600" fill="#c4c4c4"/><rect x="349.5" y="440.2" width="5.5" height="1.600" fill="#c4c4c4"/><rect x="349.5" y="448.6" width="5.5" height="1.600" fill="#c4c4c4"/><rect x="349.5" y="457.1" width="5.5" height="1.600" fill="#c4c4c4"/><rect x="349.5" y="465.6" width="5.5" height="1.600" fill="#c4c4c4"/><rect x="341" y="474.0" width="14" height="1.600" fill="#c4c4c4"/><rect x="349.5" y="482.5" width="5.5" height="1.600" fill="#c4c4c4"/><rect x="349.5" y="490.9" width="5.5" height="1.600" fill="#c4c4c4"/><rect x="349.5" y="499.4" width="5.5" height="1.600" fill="#c4c4c4"/><rect x="349.5" y="507.9" width="5.5" height="1.600" fill="#c4c4c4"/><rect x="345" y="516.3" width="10" height="1.600" fill="#c4c4c4"/><rect x="349.5" y="524.8" width="5.5" height="1.600" fill="#c4c4c4"/><rect x="349.5" y="533.3" width="5.5" height="1.600" fill="#c4c4c4"/><rect x="349.5" y="541.7" width="5.5" height="1.600" fill="#c4c4c4"/><rect x="349.5" y="550.2" width="5.5" height="1.600" fill="#c4c4c4"/><rect x="341" y="558.7" width="14" height="1.600" fill="#c4c4c4"/><rect x="349.5" y="567.1" width="5.5" height="1.600" fill="#c4c4c4"/><rect x="349.5" y="575.6" width="5.5" height="1.600" fill="#c4c4c4"/><rect x="349.5" y="584.1" width="5.5" height="1.600" fill="#c4c4c4"/><rect x="349.5" y="592.5" width="5.5" height="1.600" fill="#c4c4c4"/><rect x="345" y="601.0" width="10" height="1.600" fill="#c4c4c4"/><rect x="349.5" y="609.4" width="5.5" height="1.600" fill="#c4c4c4"/><rect x="349.5" y="617.9" width="5.5" height="1.600" fill="#c4c4c4"/><rect x="349.5" y="626.4" width="5.5" height="1.600" fill="#c4c4c4"/><rect x="349.5" y="634.8" width="5.5" height="1.600" fill="#c4c4c4"/><rect x="341" y="643.3" width="14" height="1.600" fill="#c4c4c4"/><rect x="349.5" y="651.8" width="5.5" height="1.600" fill="#c4c4c4"/><rect x="349.5" y="660.2" width="5.5" height="1.600" fill="#c4c4c4"/><rect x="349.5" y="668.7" width="5.5" height="1.600" fill="#c4c4c4"/><rect x="349.5" y="677.2" width="5.5" height="1.600" fill="#c4c4c4"/><rect x="345" y="685.6" width="10" height="1.600" fill="#c4c4c4"/><rect x="349.5" y="694.1" width="5.5" height="1.600" fill="#c4c4c4"/><rect x="349.5" y="702.5" width="5.5" height="1.600" fill="#c4c4c4"/><rect x="349.5" y="711.0" width="5.5" height="1.600" fill="#c4c4c4"/><rect x="349.5" y="719.5" width="5.5" height="1.600" fill="#c4c4c4"/><rect x="341" y="727.9" width="14" height="1.600" fill="#c4c4c4"/><rect x="349.5" y="736.4" width="5.5" height="1.600" fill="#c4c4c4"/><rect x="349.5" y="744.9" width="5.5" height="1.600" fill="#c4c4c4"/><rect x="349.5" y="753.3" width="5.5" height="1.600" fill="#c4c4c4"/><rect x="349.5" y="761.8" width="5.5" height="1.600" fill="#c4c4c4"/><rect x="345" y="770.3" width="10" height="1.600" fill="#c4c4c4"/><rect x="349.5" y="778.7" width="5.5" height="1.600" fill="#c4c4c4"/><rect x="349.5" y="787.2" width="5.5" height="1.600" fill="#c4c4c4"/><rect x="349.5" y="795.7" width="5.5" height="1.600" fill="#c4c4c4"/><rect x="349.5" y="804.1" width="5.5" height="1.600" fill="#c4c4c4"/><rect x="341" y="812.6" width="14" height="1.600" fill="#c4c4c4"/><rect x="349.5" y="821.0" width="5.5" height="1.600" fill="#c4c4c4"/><rect x="349.5" y="829.5" width="5.5" height="1.600" fill="#c4c4c4"/><rect x="349.5" y="838.0" width="5.5" height="1.600" fill="#c4c4c4"/><rect x="349.5" y="846.4" width="5.5" height="1.600" fill="#c4c4c4"/><rect x="345" y="854.9" width="10" height="1.600" fill="#c4c4c4"/><rect x="349.5" y="863.4" width="5.5" height="1.600" fill="#c4c4c4"/><rect x="349.5" y="871.8" width="5.5" height="1.600" fill="#c4c4c4"/><rect x="349.5" y="880.3" width="5.5" height="1.600" fill="#c4c4c4"/><text transform="translate(337 221.0) rotate(-90)" text-anchor="middle" font-size="11.500" fill="#fff">278m</text><text transform="translate(337 305.6) rotate(-90)" text-anchor="middle" font-size="11.500" fill="#fff">276m</text><text transform="translate(337 390.3) rotate(-90)" text-anchor="middle" font-size="11.500" fill="#fff">274m</text><text transform="translate(337 474.9) rotate(-90)" text-anchor="middle" font-size="11.500" fill="#fff">272m</text><text transform="translate(337.5 559.6) rotate(-90)" text-anchor="middle" font-size="16.5" font-weight="bold" fill="#f2b100">270m</text><text transform="translate(337 644.2) rotate(-90)" text-anchor="middle" font-size="11.500" fill="#fff">268m</text><text transform="translate(337 728.8) rotate(-90)" text-anchor="middle" font-size="11.500" fill="#fff">266m</text><text transform="translate(337 813.5) rotate(-90)" text-anchor="middle" font-size="11.500" fill="#fff">264m</text><rect x="325" y="153" width="9" height="2" fill="#f2b100"/><text x="360" y="170" font-size="16.5" font-weight="bold" fill="#00c000">ΑΑ</text><text x="360" y="195" font-size="16.5" font-weight="bold" fill="#00c000">0+000.00</text><path d="M1018.8 156V885" stroke="#c40000" stroke-width="1.700" stroke-dasharray="24 5 3 5"/><path d="M1012.8 152l6-8l6 8M1010.8 142l3-3.500l3 3.500M1020.8 142l3-3.500l3 3.500" stroke="#e01010" stroke-width="1.400" fill="none"/><text x="1018.8" y="168" text-anchor="middle" font-size="9.5" fill="#e01010">Άξονας 1</text><path d="M322 305.300L373 328.300" stroke="#009400" stroke-width="2"/><path d="M987.5 557.5L1638.5 641.2" stroke="#009a00" stroke-width="2" fill="none" /><path d="M1452.5 623.8L1452.5 631.2" stroke="#38b838" stroke-width="1.6" fill="none" /><path d="M987.5 570.0L1452.5 627.5" stroke="#3cc43c" stroke-width="2.1" fill="none" stroke-dasharray="11.500 10.500"/><path d="M987.5 573.8L1306.5 577.8L1367.5 618.5" stroke="#d00000" stroke-width="2" fill="none" /><path d="M987.5 563.0L1291.8 571.2L1300.0 575.0" stroke="#2030d0" stroke-width="2.4" fill="none" /><path d="M987.5 555.8L1279.5 560.2L1311.2 577.5" stroke="#30b8c8" stroke-width="2.2" fill="none" /><path d="M987.5 549.5L1018.8 548.8L1242.0 555.2L1242.0 559.0" stroke="#9a9a9a" stroke-width="2.4" fill="none" /><path d="M1242.0 555.2L1274.8 557.2" stroke="#c87020" stroke-width="2" fill="none" /><rect x="1266" y="529" width="5.500" height="69" fill="#161616" stroke="#b4b4b4" stroke-width="1.300"/><path d="M1266 529c-4-3-2-7 1-8s4-4 1-6" stroke="#c0c0c0" stroke-width="1.300" fill="none"/></svg>
<div style="left:1639px;top:131px;width:15px;height:740px;background:linear-gradient(90deg,#4e4e4e,#8a8a8a 60%,#a8a8a8);"></div>
<div style="left:1639px;top:490px;width:15px;height:194px;background:linear-gradient(90deg,#9a9a9a,#c4c4c4 60%,#d4d4d4);border-top:1px solid #d8d8d8;border-bottom:1px solid #e0e0e0;"></div>
<div style="left:1643px;top:587px;width:7px;height:1px;background:#8a8a8a;"></div>
<div style="left:1643px;top:590px;width:7px;height:1px;background:#8a8a8a;"></div>
<svg style="left:1639px;top:118px;" width="15" height="15" viewBox="0 0 15 15"><rect width="15" height="15" fill="#f8c21a"/><path d="M3.5 9.5l4-4l4 4" stroke="#1a1200" stroke-width="3.200" fill="none"/></svg>
<svg style="left:1639px;top:870px;" width="15" height="15" viewBox="0 0 15 15"><rect width="15" height="15" fill="#f8c21a"/><path d="M3.5 5.5l4 4l4-4" stroke="#1a1200" stroke-width="3.200" fill="none"/></svg>
<div style="left:336px;top:887px;width:1286px;height:15px;background:linear-gradient(#585858,#828282 40%,#989898);"></div>
<div style="left:766px;top:887px;width:407px;height:15px;background:linear-gradient(#7c7c7c,#b4b4b4 60%,#c4c4c4);"></div>
<div style="left:967px;top:891px;width:1px;height:7px;background:#7a7a7a;"></div>
<div style="left:970px;top:891px;width:1px;height:7px;background:#7a7a7a;"></div>
<svg style="left:321px;top:887px;" width="15" height="15" viewBox="0 0 15 15"><rect width="15" height="15" fill="#f8c21a"/><path d="M9.5 3.5l-4 4l4 4" stroke="#1a1200" stroke-width="3.200" fill="none"/></svg>
<svg style="left:1622px;top:887px;" width="15" height="15" viewBox="0 0 15 15"><rect width="15" height="15" fill="#f8c21a"/><path d="M5.5 3.5l4 4l-4 4" stroke="#1a1200" stroke-width="3.200" fill="none"/></svg>
<div style="left:291px;top:902px;width:1363px;height:20px;background:#f0f0f0;"></div>
<div class="t" style="left:293px;top:903.5px;font-size:12px;color:#222;-webkit-text-stroke:0;">X=-15.80  H=262.34</div>
<div style="left:739px;top:905px;width:1px;height:16px;background:#c4c4c4;"></div>
<div style="left:859px;top:905px;width:1px;height:16px;background:#c4c4c4;"></div>
<div style="left:1110px;top:905px;width:1px;height:16px;background:#c4c4c4;"></div>
<div style="left:291px;top:922px;width:1363px;height:28px;background:linear-gradient(#ffffff,#f6f6f6 55%,#dedede);"></div>
<div class="t" style="left:313px;top:925px;color:#7ab07a;font-size:10px;">2D</div>
<svg style="left:336px;top:926px;" width="24" height="16" viewBox="0 0 24 16"><path d="M1 3h22l-11 12z" fill="#a8d6a8" stroke="#74b074"/><path d="M6 .5h12v3h-12z" fill="#a8d6a8" stroke="#74b074"/></svg>
<div style="left:303px;top:944px;width:58px;height:1px;border-top:2px dotted #9cc89c;"></div>
<svg style="left:405px;top:930px;" width="60" height="15" viewBox="0 0 60 15"><path d="M0 4l6 4c14-8 34-8 48 0l6-4v11h-60z" fill="#a8d4a8"/><path d="M0 4l6 4c14-8 34-8 48 0l6-4" stroke="#6aa86a" fill="none"/></svg>
<div style="left:483px;top:922px;width:99px;height:28px;background:#a2bbe8;border:2px solid #7fa2e6;"></div>
<svg style="left:503px;top:927px;" width="60" height="19" viewBox="0 0 60 19"><path d="M0 8h6l4 4l12-10h16l12 10l4-4h6v11h-60z" fill="#a4d2a4"/><path d="M0 8h6l4 4l12-10h16l12 10l4-4h6" fill="none" stroke="#6aa86a"/><path d="M30 0v19" stroke="#4a7a4a" stroke-dasharray="2 2"/></svg>
<div class="t" style="left:605px;top:925px;color:#7ab07a;font-size:10px;">3D</div>
<svg style="left:627px;top:925px;" width="17" height="19" viewBox="0 0 17 19"><path d="M1 2h8l7 8v8h-15z" fill="#a8d6a8" stroke="#5a9a5a"/></svg>
<div style="left:598px;top:944px;width:58px;height:1px;border-top:2px dotted #9cc89c;"></div>
<div style="left:1656px;top:66px;width:15px;height:885px;background:#f0f0f0;"></div>
<div style="left:1657px;top:66px;width:12px;height:883px;background:#fafafa;border-top:2px solid #b4b4b4;"></div>
<div style="left:1655px;top:66px;width:1.5px;height:884px;background:#909090;"></div>
<div style="left:1663px;top:92px;width:1px;height:857px;border-left:1px dotted #b0b0b0;"></div>
<div style="left:1659px;top:475px;width:9px;height:63px;background:linear-gradient(90deg,#a8dca0,#7cc878);border:1px solid #6ab868;border-radius:4px;"></div>
<svg style="left:1661px;top:500px;" width="5" height="7" viewBox="0 0 5 7"><path d="M0 0v7l4-3.5z" fill="#fff"/></svg>
<div style="left:373px;top:197px;width:614px;height:648px;background:#f0f0f0;border:1px solid #6f9fd8;"></div>
<div style="left:374px;top:198px;width:612px;height:30px;background:#fff;"></div>
<svg style="left:380.5px;top:203.5px;" width="17" height="17" viewBox="0 0 17 17"><path d="M2.500 1.500h12q1.500 0 .8 1.500l-5.800 11.500q-1 1.500-2 0l-5.800-11.500q-.7-1.500.8-1.500z" fill="#f6a352"/><path d="M6 5h5l-2.500 4.500z" fill="#fbd3a8"/><rect x="7.900" y="4.500" width="1.300" height="4" fill="#fff"/><rect x="7.900" y="9.500" width="1.300" height="1.300" fill="#fff"/></svg>
<div class="t m" style="left:403px;top:203px;color:#222;">Μαζική Διαχείριση Γραμμών</div>
<svg style="left:866px;top:213px;" width="10" height="1" viewBox="0 0 10 1"><rect width="10" height="1" fill="#999"/></svg>
<svg style="left:911px;top:208px;" width="10" height="10" viewBox="0 0 10 10"><rect x=".5" y=".5" width="9" height="9" fill="none" stroke="#cfcfcf"/></svg>
<svg style="left:957px;top:207px;" width="11" height="11" viewBox="0 0 11 11"><path d="M0 0l11 11M11 0l-11 11" stroke="#333" stroke-width="1.2"/></svg>
<div class="gb" style="left:382px;top:239px;width:326px;height:432px;"></div>
<div class="t" style="left:387px;top:229px;background:#f0f0f0;padding:0 2px;font-size:10.6px;">Επιλεγμένες διατομές 98/90</div>
<div style="left:383.5px;top:251px;width:316.5px;height:413px;background:#fff;border:1px solid #828790;"></div>
<div style="left:386px;top:252px;width:297px;height:25px;background:#fff;border-bottom:1px solid #e5e5e5;"></div>
<div style="left:446px;top:252px;width:1px;height:25px;background:#e5e5e5;"></div>
<div style="left:510px;top:252px;width:1px;height:25px;background:#e5e5e5;"></div>
<div style="left:555px;top:252px;width:1px;height:25px;background:#e5e5e5;"></div>
<div style="left:670px;top:252px;width:1px;height:25px;background:#e5e5e5;"></div>
<div class="t" style="left:392px;top:255.5px;color:#333;">Διατομή</div>
<div class="t" style="left:451px;top:255.5px;color:#333;">Χ.Θ.</div>
<div class="t" style="left:516px;top:255.5px;color:#333;">Κλάδοι</div>
<div class="t" style="left:561px;top:255.5px;color:#333;">Τυπ. Διατομή</div>
<div style="left:386px;top:277.5px;width:285px;height:17.5px;background:#cce8ff;"></div>
<div style="left:386px;top:278px;width:297px;height:385px;overflow:hidden;">
<svg style="left:5px;top:2.5px;" width="13" height="13" viewBox="0 0 13 13"><circle cx="6.500" cy="7" r="6" fill="#bdbdbd"/><path d="M2.500 6.500l3 3.500l5.500-8" stroke="#16a02c" stroke-width="2.700" fill="none"/></svg>
<div class="t" style="left:22px;top:-1px;color:#1a1ac8;">ΑΑ</div>
<div class="t blue" style="left:65px;top:-1px;">0+000.00</div>
<div class="t blue" style="left:132px;top:-1px;">1</div>
<div class="t blue" style="left:175px;top:-1px;">Νέα ΔΖΗ - 3 Στρώ...</div>
<svg style="left:5px;top:19.5px;" width="13" height="13" viewBox="0 0 13 13"><circle cx="6.500" cy="7" r="6" fill="#bdbdbd"/><path d="M2.500 6.500l3 3.500l5.500-8" stroke="#16a02c" stroke-width="2.700" fill="none"/></svg>
<div class="t" style="left:22px;top:16px;color:#1a1ac8;">1</div>
<div class="t blue" style="left:65px;top:16px;">0+020.00</div>
<div class="t blue" style="left:132px;top:16px;">1</div>
<div class="t blue" style="left:175px;top:16px;">Νέα ΔΖΗ - 3 Στρώ...</div>
<svg style="left:5px;top:36.5px;" width="13" height="13" viewBox="0 0 13 13"><circle cx="6.500" cy="7" r="6" fill="#bdbdbd"/><path d="M2.500 6.500l3 3.500l5.500-8" stroke="#16a02c" stroke-width="2.700" fill="none"/></svg>
<div class="t" style="left:22px;top:33px;color:#1a1ac8;">2</div>
<div class="t blue" style="left:65px;top:33px;">0+040.00</div>
<div class="t blue" style="left:132px;top:33px;">1</div>
<div class="t blue" style="left:175px;top:33px;">Νέα ΔΖΗ - 3 Στρώ...</div>
<svg style="left:5px;top:53.5px;" width="13" height="13" viewBox="0 0 13 13"><circle cx="6.500" cy="7" r="6" fill="#bdbdbd"/><path d="M2.500 6.500l3 3.500l5.500-8" stroke="#16a02c" stroke-width="2.700" fill="none"/></svg>
<div class="t" style="left:22px;top:50px;color:#1a1ac8;">3</div>
<div class="t blue" style="left:65px;top:50px;">0+060.00</div>
<div class="t blue" style="left:132px;top:50px;">1</div>
<div class="t blue" style="left:175px;top:50px;">Νέα ΔΖΗ - 3 Στρώ...</div>
<svg style="left:5px;top:70.5px;" width="13" height="13" viewBox="0 0 13 13"><circle cx="6.500" cy="7" r="6" fill="#bdbdbd"/><path d="M2.500 6.500l3 3.500l5.500-8" stroke="#16a02c" stroke-width="2.700" fill="none"/></svg>
<div class="t" style="left:22px;top:67px;color:#1a1ac8;">4</div>
<div class="t blue" style="left:65px;top:67px;">0+080.00</div>
<div class="t blue" style="left:132px;top:67px;">1</div>
<div class="t blue" style="left:175px;top:67px;">Νέα ΔΖΗ - 3 Στρώ...</div>
<svg style="left:5px;top:87.5px;" width="13" height="13" viewBox="0 0 13 13"><circle cx="6.500" cy="7" r="6" fill="#bdbdbd"/><path d="M2.500 6.500l3 3.500l5.500-8" stroke="#16a02c" stroke-width="2.700" fill="none"/></svg>
<div class="t" style="left:22px;top:84px;color:#1a1ac8;">5</div>
<div class="t blue" style="left:65px;top:84px;">0+100.00</div>
<div class="t blue" style="left:132px;top:84px;">1</div>
<div class="t blue" style="left:175px;top:84px;">Νέα ΔΖΗ - 3 Στρώ...</div>
<svg style="left:5px;top:104.5px;" width="13" height="13" viewBox="0 0 13 13"><circle cx="6.500" cy="7" r="6" fill="#bdbdbd"/><path d="M2.500 6.500l3 3.500l5.500-8" stroke="#16a02c" stroke-width="2.700" fill="none"/></svg>
<div class="t" style="left:22px;top:101px;color:#1a1ac8;">6</div>
<div class="t blue" style="left:65px;top:101px;">0+120.00</div>
<div class="t blue" style="left:132px;top:101px;">1</div>
<div class="t blue" style="left:175px;top:101px;">Νέα ΔΖΗ - 3 Στρώ...</div>
<svg style="left:5px;top:121.5px;" width="13" height="13" viewBox="0 0 13 13"><circle cx="6.500" cy="7" r="6" fill="#bdbdbd"/><path d="M2.500 6.500l3 3.500l5.500-8" stroke="#16a02c" stroke-width="2.700" fill="none"/></svg>
<div class="t" style="left:22px;top:118px;color:#1a1ac8;">7</div>
<div class="t blue" style="left:65px;top:118px;">0+140.00</div>
<div class="t blue" style="left:132px;top:118px;">1</div>
<div class="t blue" style="left:175px;top:118px;">Νέα ΔΖΗ - 3 Στρώ...</div>
<svg style="left:5px;top:138.5px;" width="13" height="13" viewBox="0 0 13 13"><circle cx="6.500" cy="7" r="6" fill="#bdbdbd"/><path d="M2.500 6.500l3 3.500l5.500-8" stroke="#16a02c" stroke-width="2.700" fill="none"/></svg>
<div class="t" style="left:22px;top:135px;color:#1a1ac8;">Α1</div>
<div class="t blue" style="left:65px;top:135px;">0+151.58</div>
<div class="t blue" style="left:132px;top:135px;">1</div>
<div class="t blue" style="left:175px;top:135px;">Νέα ΔΖΗ - 3 Στρώ...</div>
<svg style="left:5px;top:155.5px;" width="13" height="13" viewBox="0 0 13 13"><circle cx="6.500" cy="7" r="6" fill="#bdbdbd"/><path d="M2.500 6.500l3 3.500l5.500-8" stroke="#16a02c" stroke-width="2.700" fill="none"/></svg>
<div class="t" style="left:22px;top:152px;color:#1a1ac8;">8</div>
<div class="t blue" style="left:65px;top:152px;">0+171.58</div>
<div class="t blue" style="left:132px;top:152px;">1</div>
<div class="t blue" style="left:175px;top:152px;">Νέα ΔΖΗ - 3 Στρώ...</div>
<svg style="left:5px;top:172.5px;" width="13" height="13" viewBox="0 0 13 13"><circle cx="6.500" cy="7" r="6" fill="#bdbdbd"/><path d="M2.500 6.500l3 3.500l5.500-8" stroke="#16a02c" stroke-width="2.700" fill="none"/></svg>
<div class="t" style="left:22px;top:169px;color:#1a1ac8;">9</div>
<div class="t blue" style="left:65px;top:169px;">0+191.58</div>
<div class="t blue" style="left:132px;top:169px;">1</div>
<div class="t blue" style="left:175px;top:169px;">Νέα ΔΖΗ - 3 Στρώ...</div>
<svg style="left:5px;top:189.5px;" width="13" height="13" viewBox="0 0 13 13"><circle cx="6.500" cy="7" r="6" fill="#bdbdbd"/><path d="M2.500 6.500l3 3.500l5.500-8" stroke="#16a02c" stroke-width="2.700" fill="none"/></svg>
<div class="t" style="left:22px;top:186px;color:#1a1ac8;">Ω'2</div>
<div class="t blue" style="left:65px;top:186px;">0+201.58</div>
<div class="t blue" style="left:132px;top:186px;">1</div>
<div class="t blue" style="left:175px;top:186px;">Νέα ΔΖΗ - 3 Στρώ...</div>
<svg style="left:5px;top:206.5px;" width="13" height="13" viewBox="0 0 13 13"><circle cx="6.500" cy="7" r="6" fill="#bdbdbd"/><path d="M2.500 6.500l3 3.500l5.500-8" stroke="#16a02c" stroke-width="2.700" fill="none"/></svg>
<div class="t" style="left:22px;top:203px;color:#1a1ac8;">10</div>
<div class="t blue" style="left:65px;top:203px;">0+221.58</div>
<div class="t blue" style="left:132px;top:203px;">1</div>
<div class="t blue" style="left:175px;top:203px;">Νέα ΔΖΗ - 3 Στρώ...</div>
<svg style="left:5px;top:223.5px;" width="13" height="13" viewBox="0 0 13 13"><circle cx="6.500" cy="7" r="6" fill="#bdbdbd"/><path d="M2.500 6.500l3 3.500l5.500-8" stroke="#16a02c" stroke-width="2.700" fill="none"/></svg>
<div class="t" style="left:22px;top:220px;color:#1a1ac8;">11</div>
<div class="t blue" style="left:65px;top:220px;">0+241.58</div>
<div class="t blue" style="left:132px;top:220px;">1</div>
<div class="t blue" style="left:175px;top:220px;">Νέα ΔΖΗ - 3 Στρώ...</div>
<svg style="left:5px;top:240.5px;" width="13" height="13" viewBox="0 0 13 13"><circle cx="6.500" cy="7" r="6" fill="#bdbdbd"/><path d="M2.500 6.500l3 3.500l5.500-8" stroke="#16a02c" stroke-width="2.700" fill="none"/></svg>
<div class="t" style="left:22px;top:237px;color:#1a1ac8;">Δ2</div>
<div class="t blue" style="left:65px;top:237px;">0+257.86</div>
<div class="t blue" style="left:132px;top:237px;">1</div>
<div class="t blue" style="left:175px;top:237px;">Νέα ΔΖΗ - 3 Στρώ...</div>
<svg style="left:5px;top:257.5px;" width="13" height="13" viewBox="0 0 13 13"><circle cx="6.500" cy="7" r="6" fill="#bdbdbd"/><path d="M2.500 6.500l3 3.500l5.500-8" stroke="#16a02c" stroke-width="2.700" fill="none"/></svg>
<div class="t" style="left:22px;top:254px;color:#1a1ac8;">12</div>
<div class="t blue" style="left:65px;top:254px;">0+274.13</div>
<div class="t blue" style="left:132px;top:254px;">1</div>
<div class="t blue" style="left:175px;top:254px;">Νέα ΔΖΗ - 3 Στρώ...</div>
<svg style="left:5px;top:274.5px;" width="13" height="13" viewBox="0 0 13 13"><circle cx="6.500" cy="7" r="6" fill="#bdbdbd"/><path d="M2.500 6.500l3 3.500l5.500-8" stroke="#16a02c" stroke-width="2.700" fill="none"/></svg>
<div class="t" style="left:22px;top:271px;color:#1a1ac8;">13</div>
<div class="t blue" style="left:65px;top:271px;">0+294.13</div>
<div class="t blue" style="left:132px;top:271px;">1</div>
<div class="t blue" style="left:175px;top:271px;">Νέα ΔΖΗ - 3 Στρώ...</div>
<svg style="left:5px;top:291.5px;" width="13" height="13" viewBox="0 0 13 13"><circle cx="6.500" cy="7" r="6" fill="#bdbdbd"/><path d="M2.500 6.500l3 3.500l5.500-8" stroke="#16a02c" stroke-width="2.700" fill="none"/></svg>
<div class="t" style="left:22px;top:288px;color:#1a1ac8;">Ω'2</div>
<div class="t blue" style="left:65px;top:288px;">0+314.13</div>
<div class="t blue" style="left:132px;top:288px;">1</div>
<div class="t blue" style="left:175px;top:288px;">Νέα ΔΖΗ - 3 Στρώ...</div>
<svg style="left:5px;top:308.5px;" width="13" height="13" viewBox="0 0 13 13"><circle cx="6.500" cy="7" r="6" fill="#bdbdbd"/><path d="M2.500 6.500l3 3.500l5.500-8" stroke="#16a02c" stroke-width="2.700" fill="none"/></svg>
<div class="t" style="left:22px;top:305px;color:#1a1ac8;">14</div>
<div class="t blue" style="left:65px;top:305px;">0+324.13</div>
<div class="t blue" style="left:132px;top:305px;">1</div>
<div class="t blue" style="left:175px;top:305px;">Νέα ΔΖΗ - 3 Στρώ...</div>
<svg style="left:5px;top:325.5px;" width="13" height="13" viewBox="0 0 13 13"><circle cx="6.500" cy="7" r="6" fill="#bdbdbd"/><path d="M2.500 6.500l3 3.500l5.500-8" stroke="#16a02c" stroke-width="2.700" fill="none"/></svg>
<div class="t" style="left:22px;top:322px;color:#1a1ac8;">15</div>
<div class="t blue" style="left:65px;top:322px;">0+344.13</div>
<div class="t blue" style="left:132px;top:322px;">1</div>
<div class="t blue" style="left:175px;top:322px;">Νέα ΔΖΗ - 3 Στρώ...</div>
<svg style="left:5px;top:342.5px;" width="13" height="13" viewBox="0 0 13 13"><circle cx="6.500" cy="7" r="6" fill="#bdbdbd"/><path d="M2.500 6.500l3 3.500l5.500-8" stroke="#16a02c" stroke-width="2.700" fill="none"/></svg>
<div class="t" style="left:22px;top:339px;color:#1a1ac8;">Α'2</div>
<div class="t blue" style="left:65px;top:339px;">0+364.13</div>
<div class="t blue" style="left:132px;top:339px;">1</div>
<div class="t blue" style="left:175px;top:339px;">Νέα ΔΖΗ - 3 Στρώ...</div>
<svg style="left:5px;top:359.5px;" width="13" height="13" viewBox="0 0 13 13"><circle cx="6.500" cy="7" r="6" fill="#bdbdbd"/><path d="M2.500 6.500l3 3.500l5.500-8" stroke="#16a02c" stroke-width="2.700" fill="none"/></svg>
<div class="t" style="left:22px;top:356px;color:#1a1ac8;">Α3</div>
<div class="t blue" style="left:65px;top:356px;">0+375.22</div>
<div class="t blue" style="left:132px;top:356px;">1</div>
<div class="t blue" style="left:175px;top:356px;">Νέα ΔΖΗ - 3 Στρώ...</div>
<svg style="left:5px;top:376.5px;" width="13" height="13" viewBox="0 0 13 13"><circle cx="6.500" cy="7" r="6" fill="#bdbdbd"/><path d="M2.500 6.500l3 3.500l5.500-8" stroke="#16a02c" stroke-width="2.700" fill="none"/></svg>
<div class="t" style="left:22px;top:373px;color:#1a1ac8;">16</div>
<div class="t blue" style="left:65px;top:373px;">0+395.22</div>
<div class="t blue" style="left:132px;top:373px;">1</div>
<div class="t blue" style="left:175px;top:373px;">Νέα ΔΖΗ - 3 Στρώ...</div>
</div>
<div style="left:683px;top:252px;width:16px;height:411px;background:#f0f0f0;"></div>
<svg style="left:687px;top:259px;" width="9" height="5" viewBox="0 0 9 5"><path d="M.5 4.5l4-4l4 4" fill="none" stroke="#555" stroke-width="1.3"/></svg>
<svg style="left:687px;top:651px;" width="9" height="5" viewBox="0 0 9 5"><path d="M.5 .5l4 4l4-4" fill="none" stroke="#555" stroke-width="1.3"/></svg>
<div style="left:684px;top:272px;width:14px;height:90px;background:#c2c2c2;"></div>
<div class="gb" style="left:382px;top:685px;width:326px;height:153px;"></div>
<div class="t" style="left:386px;top:668px;background:#f0f0f0;padding:0 2px;">Επιλογή διατομών</div>
<div style="left:392px;top:688px;width:312px;height:35px;border:1px solid #dedede;"></div>
<div style="left:392px;top:725px;width:312px;height:35px;border:1px solid #dedede;"></div>
<div style="left:392px;top:763px;width:312px;height:35px;border:1px solid #dedede;"></div>
<div style="left:392px;top:800px;width:312px;height:35px;border:1px solid #dedede;"></div>
<div class="cb" style="left:391px;top:696.5px;width:13px;height:13px;"></div>
<div class="t" style="left:405px;top:693px;">Χ.Θ.</div>
<div class="t g" style="right:1410px;top:693px;">από :</div>
<div class="inpd" style="left:515px;top:693px;width:58px;height:20px;"></div>
<div class="t" style="left:518px;top:693.5px;color:#777;">0.000</div>
<div class="t g" style="right:1294px;top:693px;">μέχρι :</div>
<div class="inpd" style="left:630px;top:693px;width:58px;height:20px;"></div>
<div class="t" style="left:633px;top:693.5px;color:#777;">1479.481</div>
<div class="cb" style="left:391px;top:734.5px;width:13px;height:13px;"></div>
<div class="t" style="left:405px;top:731px;">Τυπ. Διατομή</div>
<div style="left:506px;top:730px;width:183px;height:21px;background:#c4c4c4;border:1px solid #b4b4b4;"></div>
<div class="t" style="left:510px;top:731px;color:#7c7c7c;">Νέα ΔΖΗ - 3 Στρώσεις</div>
<svg style="left:675px;top:738.5px;" width="9" height="5" viewBox="0 0 9 5"><path d="M.5 .5l4 4l4-4" fill="none" stroke="#8a8a8a" stroke-width="1.1"/></svg>
<div class="cb" style="left:391px;top:772.5px;width:13px;height:13px;"></div>
<div class="t" style="left:405px;top:769px;">Κλάδοι</div>
<div class="rdd" style="left:506px;top:772.5px;width:13px;height:13px;"></div>
<div style="left:509px;top:775.5px;width:7px;height:7px;background:#bbb;border-radius:50%;"></div>
<div class="t g" style="left:521px;top:769px;">ενός κλάδου</div>
<div class="rdd" style="left:596px;top:772.5px;width:13px;height:13px;"></div>
<div class="t g" style="left:611px;top:769px;">δύο κλάδων</div>
<div class="cb" style="left:391px;top:810.5px;width:13px;height:13px;"></div>
<div class="rdd" style="left:447px;top:810.5px;width:13px;height:13px;"></div>
<div style="left:450px;top:813.5px;width:7px;height:7px;background:#bbb;border-radius:50%;"></div>
<svg style="left:463px;top:811px;" width="12" height="12" viewBox="0 0 12 12"><circle cx="6" cy="6" r="5.5" fill="#b8b8b8"/><path d="M3 6l2.2 2.4l3.8-4.6" stroke="#fff" stroke-width="1.6" fill="none"/></svg>
<div class="rdd" style="left:493px;top:810.5px;width:13px;height:13px;"></div>
<svg style="left:510px;top:811px;" width="12" height="12" viewBox="0 0 12 12"><circle cx="6" cy="6" r="5.5" fill="#b8b8b8"/><path d="M4.4 3v6M7.6 3v6" stroke="#fff" stroke-width="1.5"/></svg>
<div class="btn" style="left:542px;top:806px;width:66px;height:22px;"></div>
<div class="t" style="left:542px;top:807px;width:66px;text-align:center;">Επιλογή</div>
<div class="btn" style="left:616px;top:806px;width:82px;height:22px;"></div>
<div class="t" style="left:616px;top:807px;width:82px;text-align:center;">Απεπιλογή</div>
<div class="gb" style="left:713px;top:239px;width:264px;height:441px;"></div>
<div class="t" style="left:716px;top:228px;background:#f0f0f0;padding:0 1px;">Λειτουργία</div>
<div class="rd" style="left:718px;top:247px;width:13px;height:13px;"></div>
<div style="left:721px;top:250px;width:7px;height:7px;background:#222;border-radius:50%;"></div>
<div class="t" style="left:733px;top:243.5px;">Αντιγραφή - επικόλληση</div>
<div class="rd" style="left:718px;top:261px;width:13px;height:13px;"></div>
<div class="t" style="left:733px;top:257.5px;">Αποκοπή - επικόλληση</div>
<div class="rd" style="left:718px;top:275px;width:13px;height:13px;"></div>
<div class="t" style="left:733px;top:271.5px;">Ένωση</div>
<div class="rd" style="left:718px;top:289px;width:13px;height:13px;"></div>
<div class="t" style="left:733px;top:285.5px;">Τροποποίηση</div>
<div class="rd" style="left:718px;top:303px;width:13px;height:13px;"></div>
<div class="t" style="left:733px;top:299.5px;">Διαγραφή</div>
<div style="left:714px;top:319px;width:262px;height:1px;background:#dcdcdc;"></div>
<div class="t" style="left:719px;top:324px;">Γραμμή Αφετηρίας</div>
<div class="t g" style="left:915px;top:324px;">Α/Α</div>
<div class="combo" style="left:716px;top:344px;width:191px;height:20px;"></div>
<div class="t" style="left:720px;top:344.5px;">ΤΕΧ δημιουργικό</div>
<svg style="left:892px;top:352px;" width="9" height="5" viewBox="0 0 9 5"><path d="M.5 .5l4 4l4-4" fill="none" stroke="#444" stroke-width="1.1"/></svg>
<div class="inpd" style="left:917px;top:344px;width:33px;height:20px;"></div>
<div class="t g" style="left:921px;top:344.5px;">1</div>
<svg style="left:954px;top:347px;" width="7" height="14" viewBox="0 0 7 14"><path d="M0 4l3.5-4l3.5 4zM0 10l3.5 4l3.5-4z" fill="#a0a0a0"/></svg>
<div class="cb" style="left:716px;top:367.5px;width:13px;height:13px;"></div>
<div class="t" style="left:731px;top:364px;">Εμφάνιση περιβολλουσών</div>
<div class="rdd" style="left:721px;top:385.5px;width:13px;height:13px;"></div>
<div style="left:724px;top:388.5px;width:7px;height:7px;background:#bbb;border-radius:50%;"></div>
<div class="t g" style="left:735px;top:382px;">κατά Εργασία</div>
<div class="rdd" style="left:840px;top:385.5px;width:13px;height:13px;"></div>
<div class="t g" style="left:854px;top:382px;">κατά Οικογένεια</div>
<div class="t" style="left:719px;top:405px;">Γραμμή Προορισμού</div>
<div class="t" style="left:915px;top:405px;">Α/Α</div>
<div class="combo" style="left:716px;top:427px;width:192px;height:20px;"></div>
<div class="t" style="left:722px;top:427.5px;white-space:pre;">[ΣΧ1]     Σχέδιο</div>
<svg style="left:892px;top:435px;" width="9" height="5" viewBox="0 0 9 5"><path d="M.5 .5l4 4l4-4" fill="none" stroke="#444" stroke-width="1.1"/></svg>
<div class="inp" style="left:916px;top:427px;width:33px;height:20px;"></div>
<div class="t" style="left:920px;top:427.5px;">0</div>
<svg style="left:954px;top:430px;" width="7" height="14" viewBox="0 0 7 14"><path d="M0 4l3.5-4l3.5 4zM0 10l3.5 4l3.5-4z" fill="#333"/></svg>
<div style="left:714px;top:455px;width:262px;height:1px;background:#dcdcdc;"></div>
<div class="t" style="left:716px;top:457.5px;">Είδος τροποποίησης</div>
<div class="combo" style="left:716px;top:476px;width:245px;height:20px;"></div>
<div class="t" style="left:721px;top:476.5px;">Μετατόπιση κατά Δχ, Δh</div>
<svg style="left:946px;top:484px;" width="9" height="5" viewBox="0 0 9 5"><path d="M.5 .5l4 4l4-4" fill="none" stroke="#444" stroke-width="1.1"/></svg>
<div class="t g" style="left:724px;top:504px;">Σημείο αναφοράς:</div>
<div class="inpd" style="left:830px;top:504px;width:24px;height:20px;"></div>
<div class="t g" style="left:835px;top:504.5px;">1</div>
<svg style="left:857px;top:507px;" width="7" height="14" viewBox="0 0 7 14"><path d="M0 4l3.5-4l3.5 4zM0 10l3.5 4l3.5-4z" fill="#a0a0a0"/></svg>
<div class="gb" style="left:719px;top:536px;width:243px;height:64px;"></div>
<div class="t" style="left:722px;top:526px;background:#f0f0f0;padding:0 1px;">Ορισμός Δχ</div>
<div class="t" style="left:726px;top:540px;">Δχ</div>
<div class="t" style="left:773px;top:540px;">Διάγραμμα</div>
<div class="inp" style="left:726px;top:561px;width:42px;height:20px;"></div>
<div class="t" style="left:730px;top:561.5px;">0.000</div>
<div class="combo" style="left:773px;top:561px;width:183px;height:20px;"></div>
<div class="t" style="left:778px;top:561.5px;">χωρίς διάγραμμα</div>
<svg style="left:942px;top:569px;" width="9" height="5" viewBox="0 0 9 5"><path d="M.5 .5l4 4l4-4" fill="none" stroke="#444" stroke-width="1.1"/></svg>
<div class="t" style="left:726px;top:581.5px;">Αντιστροφή προσήμων διαγράμματος</div>
<div class="cb" style="left:940px;top:585px;width:13px;height:13px;"></div>
<div class="gb" style="left:719px;top:613px;width:243px;height:64px;"></div>
<div class="t" style="left:722px;top:603px;background:#f0f0f0;padding:0 1px;">Ορισμός Δh</div>
<div class="t" style="left:726px;top:617px;">Δh</div>
<div class="t" style="left:773px;top:617px;">Διάγραμμα</div>
<div class="inp" style="left:726px;top:638px;width:42px;height:20px;"></div>
<div class="t" style="left:730px;top:638.5px;">0.000</div>
<div class="combo" style="left:773px;top:638px;width:183px;height:20px;"></div>
<div class="t" style="left:778px;top:638.5px;">χωρίς διάγραμμα</div>
<svg style="left:942px;top:646px;" width="9" height="5" viewBox="0 0 9 5"><path d="M.5 .5l4 4l4-4" fill="none" stroke="#444" stroke-width="1.1"/></svg>
<div class="t" style="left:726px;top:658.5px;">Αντιστροφή προσήμων διαγράμματος</div>
<div class="cb" style="left:940px;top:662px;width:13px;height:13px;"></div>
<div style="left:805px;top:817px;width:80px;height:23px;background:#e1e1e1;border:2px solid #0078d7;text-align:center;"></div>
<div class="t" style="left:805px;top:818.5px;width:80px;text-align:center;">Εφαρμογή</div>
<div class="btn" style="left:895px;top:817px;width:80px;height:23px;"></div>
<div class="t" style="left:895px;top:818.5px;width:80px;text-align:center;">Έξοδος</div>
<div style="left:1671px;top:90px;width:249px;height:402px;background:#f0f0f0;border-bottom:1px solid #c4c4c4;"></div>
<div class="combo" style="left:1678px;top:97px;width:80px;height:20px;"></div>
<div class="t" style="left:1682px;top:97.5px;">Κομβ επίλο</div>
<svg style="left:1745px;top:105px;" width="9" height="5" viewBox="0 0 9 5"><path d="M.5 .5l4 4l4-4" fill="none" stroke="#444" stroke-width="1.1"/></svg>
<svg style="left:1770px;top:99px;" width="16" height="16" viewBox="0 0 16 16"><circle cx="8" cy="8" r="6.500" fill="#fdf0d4" stroke="#f6c878" stroke-width="1.400"/><path d="M8 2v12" stroke="#f0a848" stroke-width="2"/></svg>
<svg style="left:1796px;top:99px;" width="17" height="17" viewBox="0 0 17 17"><rect x="1" y="1" width="10" height="10" fill="#fdf0d4" stroke="#f4c070" stroke-width="1.300"/><rect x="6" y="6" width="10" height="9" fill="#fff8e8" stroke="#f4c070" stroke-width="1.300"/></svg>
<div style="left:1820px;top:98px;width:1px;height:20px;background:#9a9a9a;"></div>
<svg style="left:1831px;top:100px;" width="15" height="15" viewBox="0 0 15 15"><rect x=".5" y=".5" width="14" height="14" fill="#e4e4e4" stroke="#cfcfcf"/><path d="M3 4h9M3 7.5h9M3 11h9" stroke="#c4c4c4"/></svg>
<svg style="left:1855px;top:98px;" width="18" height="18" viewBox="0 0 18 18"><path d="M1 3h14M3 7h10" stroke="#444" stroke-width="1.6"/><path d="M12 6v6h4l-6 6l-6-6h4v-6z" fill="#3aaa3a" transform="translate(2 -1) scale(.85)"/></svg>
<div style="left:1881px;top:98px;width:1px;height:20px;background:#9a9a9a;"></div>
<svg style="left:1891px;top:99px;" width="16" height="17" viewBox="0 0 16 17"><rect x=".5" y="2.5" width="13" height="14" fill="#fff" stroke="#9a9a9a"/><rect x="3" y="0" width="8" height="4" fill="#e8a040"/><path d="M9 6l5 1l-1 4" fill="#e8a040"/></svg>
<div style="left:1678px;top:145px;width:234px;height:1px;background:#d9d9d9;"></div>
<div style="left:1681px;top:128px;width:65px;height:18px;background:#f9f9f9;border:1px solid #cfcfcf;border-bottom:none;"></div>
<div class="t" style="left:1681px;top:127.5px;width:65px;text-align:center;color:#c08048;font-size:10.5px;">Πρόσθετα</div>
<div style="left:1678px;top:156px;width:234px;height:20px;background:linear-gradient(#ffffff,#e9e9e9);border:1px solid #d4d4d4;"></div>
<div class="t" style="left:1688px;top:156px;color:#a35c14;font-size:14.500px;-webkit-text-stroke:.5px;">Έργο</div>
<div style="left:1898px;top:166px;width:7px;height:1px;background:#bbb;"></div>
<div style="left:1696px;top:176px;width:216px;height:52px;background:#fbfbfb;border:1px solid #bcbcbc;border-top:none;"></div>
<div style="left:1696px;top:193px;width:216px;height:1px;background:#c8c8c8;"></div>
<div style="left:1696px;top:210px;width:216px;height:1px;background:#c8c8c8;"></div>
<div style="left:1806px;top:176px;width:1px;height:52px;background:#c8c8c8;"></div>
<div class="t" style="left:1702px;top:175px;">Όνομα</div>
<div class="t" style="left:1702px;top:192px;">Άνοιγμα</div>
<div class="t" style="left:1702px;top:209px;">Αποθήκευση</div>
<div style="left:1807px;top:176px;width:104px;height:17px;overflow:hidden;"><div class="t" style="left:8px;top:-1px;">C:\Users\Public\Docu</div></div>
<div style="left:1807px;top:194px;width:104px;height:16px;overflow:hidden;"><div class="t" style="left:8px;top:-2px;">21/2/2019 12:47:23</div></div>
<div style="left:1672px;top:499px;width:248px;height:1px;border-top:2px dotted #c6c6c6;"></div>
<div class="hdr" style="left:1671px;top:507px;width:260px;height:23px;"></div>
<svg style="left:1675.5px;top:511px;" width="15" height="15" viewBox="0 0 15 15"><circle cx="7.5" cy="7.5" r="6.9" fill="#f4a55c" stroke="#fbe3c8" stroke-width="1.2"/><rect x="4.5" y="6.7" width="6" height="1.6" fill="#fff"/></svg>
<div class="t i" style="left:1694px;top:509px;color:#1a1a1a;">Επιλογές Διατομών</div>
<svg style="left:1857px;top:511px;" width="14.5" height="14.5" viewBox="0 0 14.5 14.5"><circle cx="7.25" cy="7.25" r="6.65" fill="#f4a55c" stroke="#fbe3c8" stroke-width="1.2"/><path d="M4.25 8.75l3-3l3 3" stroke="#fff" stroke-width="1.5" fill="none"/></svg>
<svg style="left:1875px;top:511px;" width="14.5" height="14.5" viewBox="0 0 14.5 14.5"><circle cx="7.25" cy="7.25" r="6.65" fill="#f4a55c" stroke="#fbe3c8" stroke-width="1.2"/><rect x="5.25" y="4.25" width="4" height="6" rx="1" fill="#fff"/></svg>
<svg style="left:1894px;top:512px;" width="21" height="13" viewBox="0 0 21 13"><rect x=".5" y=".5" width="20" height="12" rx="4" fill="#f4a55c" stroke="#fbe3c8" stroke-width="1.2"/><path d="M7.5 3.5l6 6m0-6l-6 6" stroke="#fff" stroke-width="2"/></svg>
<div style="left:1672px;top:530px;width:248px;height:420px;background:#fff;border-bottom:1px solid #b0b0b0;"></div>
<div style="left:1793px;top:530px;width:1px;height:420px;background:#e0e0e0;"></div>
<div style="left:1690px;top:533px;width:36px;height:14px;background:#d9d9d9;"></div>
<svg style="left:1679px;top:536.5px;" width="5" height="5" viewBox="0 0 5 5"><path d="M2.5 0v5M0 2.5h5" stroke="#b4b4b4" stroke-width="1.4"/></svg>
<div class="t" style="left:1692px;top:529px;color:#222;">Γενικά</div>
<svg style="left:1679px;top:552.5px;" width="5" height="5" viewBox="0 0 5 5"><path d="M2.5 0v5M0 2.5h5" stroke="#b4b4b4" stroke-width="1.4"/></svg>
<div class="t" style="left:1692px;top:545px;color:#222;">Εργασίες</div>
<svg style="left:1679px;top:568.5px;" width="5" height="5" viewBox="0 0 5 5"><path d="M2.5 0v5M0 2.5h5" stroke="#b4b4b4" stroke-width="1.4"/></svg>
<div class="t" style="left:1692px;top:561px;color:#222;">Προσέγγιση</div>
<svg style="left:1804px;top:536.5px;" width="5" height="5" viewBox="0 0 5 5"><path d="M2.5 0v5M0 2.5h5" stroke="#b4b4b4" stroke-width="1.4"/></svg>
<div class="t" style="left:1817px;top:529px;color:#222;">Γενικά</div>
<div class="cb" style="left:1816.5px;top:548.5px;width:13px;height:13px;"></div>
<svg style="left:1818.5px;top:551px;" width="9" height="8" viewBox="0 0 9 8"><path d="M.8 4l2.6 2.8l5-6" fill="none" stroke="#222" stroke-width="1.4"/></svg>
<div class="t" style="left:1833px;top:545px;color:#222;">Άξονας</div>
<div class="cb" style="left:1816.5px;top:564.5px;width:13px;height:13px;"></div>
<div class="t" style="left:1833px;top:561px;color:#222;">Η ερυθράς</div>
<div class="cb" style="left:1816.5px;top:580.5px;width:13px;height:13px;"></div>
<div class="t" style="left:1833px;top:577px;color:#222;">Κάνναβος</div>
<div class="cb" style="left:1816.5px;top:596.5px;width:13px;height:13px;"></div>
<div class="t" style="left:1833px;top:593px;color:#222;">Σημεία γραμμών</div>
<div class="cb" style="left:1816.5px;top:612.5px;width:13px;height:13px;"></div>
<div class="t" style="left:1833px;top:609px;color:#222;">Κλείδωμα κλίμακας</div>
<div class="cb" style="left:1816.5px;top:628.5px;width:13px;height:13px;"></div>
<svg style="left:1818.5px;top:631px;" width="9" height="8" viewBox="0 0 9 8"><path d="M.8 4l2.6 2.8l5-6" fill="none" stroke="#222" stroke-width="1.4"/></svg>
<div class="t" style="left:1833px;top:625px;color:#222;">Διαχωριστής σύνθετης</div>
<div class="cb" style="left:1816.5px;top:644.5px;width:13px;height:13px;"></div>
<svg style="left:1818.5px;top:647px;" width="9" height="8" viewBox="0 0 9 8"><path d="M.8 4l2.6 2.8l5-6" fill="none" stroke="#222" stroke-width="1.4"/></svg>
<div class="t" style="left:1833px;top:641px;color:#222;">Πληροφορίες διατομής</div>
<svg style="left:1804px;top:664.5px;" width="5" height="5" viewBox="0 0 5 5"><path d="M2.5 0v5M0 2.5h5" stroke="#b4b4b4" stroke-width="1.4"/></svg>
<div class="t" style="left:1817px;top:657px;color:#222;">Στοιχεία γραμμής</div>
<div class="cb" style="left:1816.5px;top:676.5px;width:13px;height:13px;"></div>
<div class="t" style="left:1833px;top:673px;color:#222;">Δx</div>
<div class="cb" style="left:1816.5px;top:692.5px;width:13px;height:13px;"></div>
<svg style="left:1818.5px;top:695px;" width="9" height="8" viewBox="0 0 9 8"><path d="M.8 4l2.6 2.8l5-6" fill="none" stroke="#222" stroke-width="1.4"/></svg>
<div class="t" style="left:1833px;top:689px;color:#222;">Δh</div>
<div class="cb" style="left:1816.5px;top:708.5px;width:13px;height:13px;"></div>
<div class="t" style="left:1833px;top:705px;color:#222;">Κλίσεις</div>
<div class="cb" style="left:1816.5px;top:724.5px;width:13px;height:13px;"></div>
<div class="t" style="left:1833px;top:721px;color:#222;">Χ,Η</div>
<div style="left:1794px;top:933px;width:126px;height:16px;background:#f0f0f0;"></div>
<svg style="left:1801px;top:937px;" width="5" height="8" viewBox="0 0 5 8"><path d="M4.5 .5l-4 3.5l4 3.5" fill="none" stroke="#555" stroke-width="1.2"/></svg>
<svg style="left:1907px;top:937px;" width="5" height="8" viewBox="0 0 5 8"><path d="M.5 .5l4 3.5l-4 3.5" fill="none" stroke="#555" stroke-width="1.2"/></svg>
<div style="left:1812px;top:934px;width:76px;height:14px;background:#cdcdcd;"></div>
<div style="left:0px;top:951px;width:1920px;height:15px;background:#f0f0f0;"></div>
<div style="left:0px;top:949px;width:1920px;height:2px;background:#a8a8a8;"></div>
<div style="left:0px;top:958px;width:1920px;height:1px;border-top:2px dotted #c6c6c6;"></div>
<div style="left:928px;top:953px;width:64px;height:10px;background:linear-gradient(#a8dca0,#7cc878);border:1px solid #6ab868;border-radius:4px;"></div>
<div class="hdr" style="left:0px;top:966.5px;width:1920px;height:24.5px;"></div>
<svg style="left:4.5px;top:971px;" width="15" height="15" viewBox="0 0 15 15"><circle cx="7.5" cy="7.5" r="6.9" fill="#f4a55c" stroke="#fbe3c8" stroke-width="1.2"/><rect x="4.5" y="6.7" width="6" height="1.6" fill="#fff"/></svg>
<div class="t i" style="left:25px;top:969px;color:#1a1a1a;">Μηνύματα</div>
<svg style="left:1891px;top:972px;" width="24" height="13" viewBox="0 0 24 13"><rect x=".5" y=".5" width="23" height="12" rx="4" fill="#f4a55c" stroke="#fbe3c8" stroke-width="1.2"/><path d="M9.0 3.5l6 6m0-6l-6 6" stroke="#fff" stroke-width="2"/></svg>
<div style="left:0px;top:991px;width:1920px;height:49px;background:#f0f0f0;"></div>
<div style="left:0px;top:1012px;width:1920px;height:1px;background:#d9d9d9;"></div>
<div style="left:2px;top:992px;width:60px;height:21px;background:#fff;border:1px solid #d9d9d9;border-bottom:none;"></div>
<div class="t" style="left:2px;top:992.5px;width:60px;text-align:center;">Μηνύματα</div>
<div style="left:63px;top:994px;width:116px;height:19px;background:#f0f0f0;border:1px solid #d9d9d9;border-bottom:none;"></div>
<div class="t" style="left:63px;top:993.5px;width:116px;text-align:center;">Διάγραμμα Επικλίσεων</div>
<div style="left:3px;top:1016px;width:1914px;height:20px;background:#fff;border:1px solid #8a8a8a;"></div>
</div></div>
</body></html>
